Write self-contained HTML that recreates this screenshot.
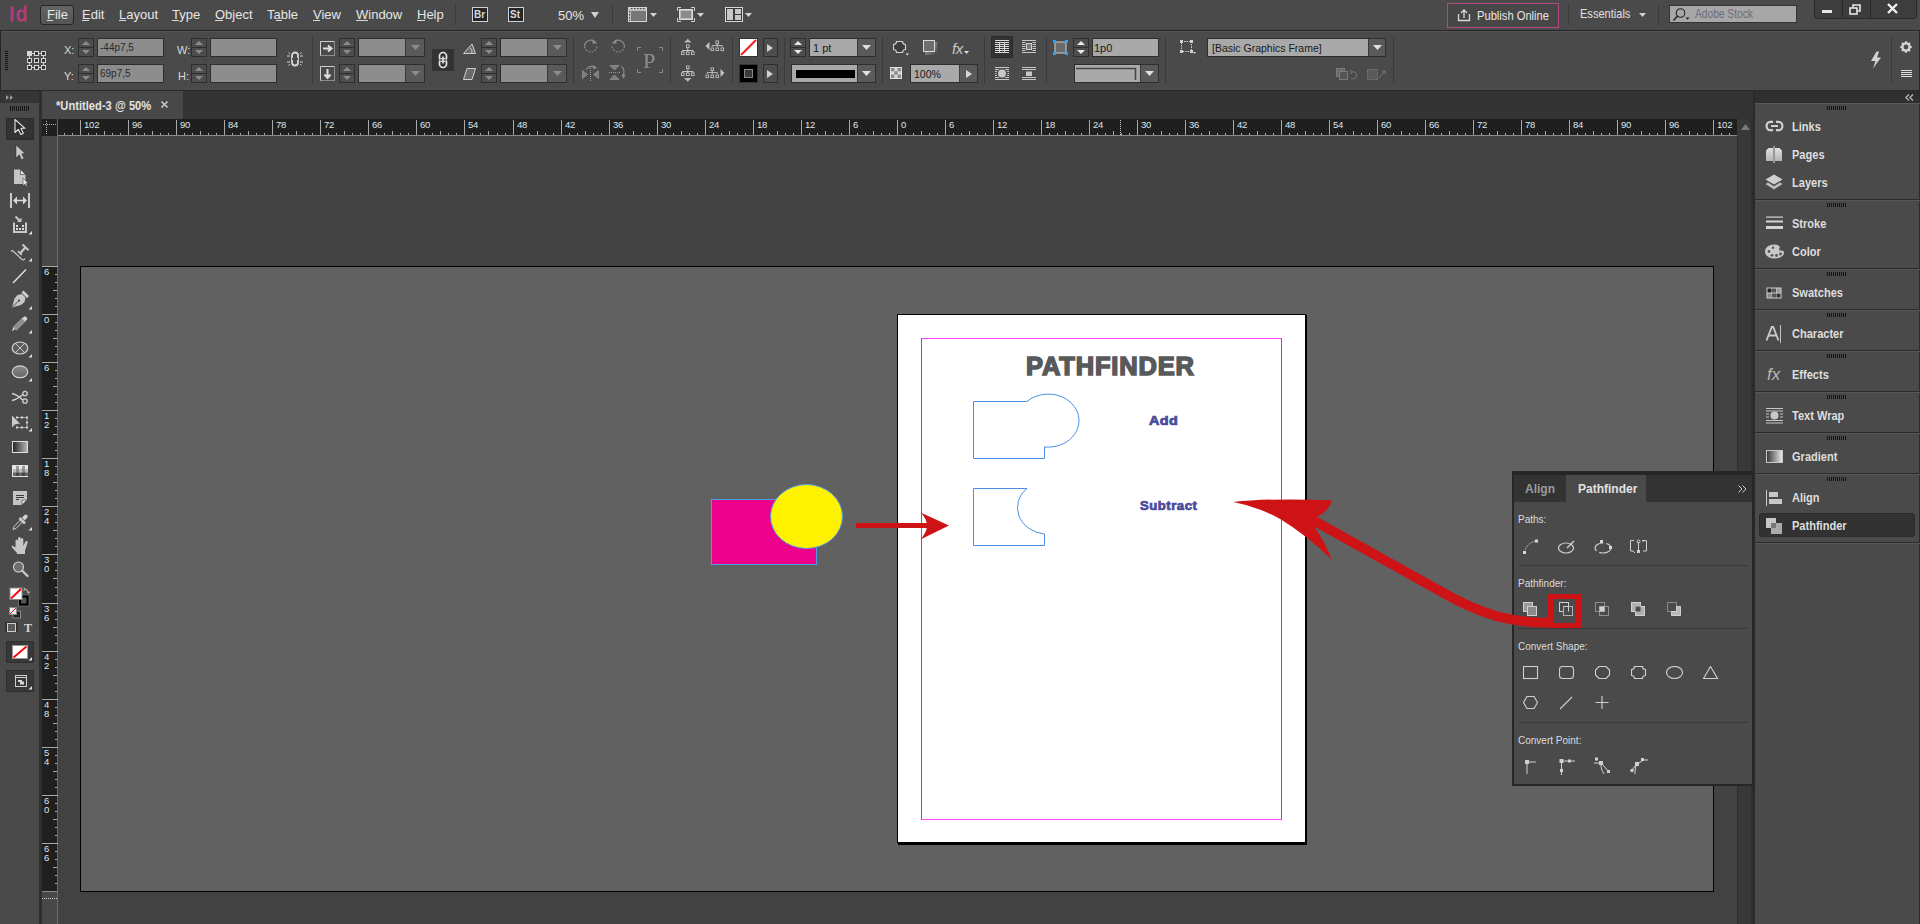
<!DOCTYPE html>
<html><head><meta charset="utf-8"><style>
html,body{margin:0;padding:0;width:1920px;height:924px;overflow:hidden;background:#424242}
body>div,body>span,body>svg{position:absolute;display:block}
span{white-space:nowrap;font-family:"Liberation Sans",sans-serif;color:#dcdcdc;font-size:12px;line-height:1}
</style></head><body>
<div style="left:0px;top:0px;width:1920px;height:30px;background:#4a4a4a"></div>
<div style="left:0px;top:30px;width:1920px;height:1px;background:#262626"></div>
<div style="left:0px;top:31px;width:1920px;height:59px;background:#4a4a4a"></div>
<div style="left:0px;top:31px;width:1920px;height:1px;background:#545454"></div>
<div style="left:0px;top:31px;width:1px;height:59px;background:#262626"></div>
<div style="left:1919px;top:31px;width:1px;height:59px;background:#262626"></div>
<div style="left:0px;top:90px;width:1920px;height:1px;background:#2a2a2a"></div>
<div style="left:0px;top:91px;width:1920px;height:28px;background:#333333"></div>
<div style="left:42px;top:91px;width:141px;height:28px;background:#484848"></div>
<div style="left:0px;top:91px;width:39px;height:833px;background:#4a4a4a"></div>
<div style="left:0px;top:91px;width:39px;height:12px;background:#353535"></div>
<div style="left:39px;top:91px;width:3px;height:833px;background:#2e2e2e"></div>
<div style="left:42px;top:119px;width:1695px;height:17px;background:#1f1f1f"></div>
<div style="left:42px;top:136px;width:16px;height:788px;background:#484848"></div>
<div style="left:42px;top:266px;width:16px;height:625px;background:#1f1f1f"></div>
<div style="left:57px;top:119px;width:1px;height:805px;background:#6a6a6a"></div>
<div style="left:58px;top:136px;width:1679px;height:788px;background:#424242"></div>
<div style="left:1737px;top:119px;width:16px;height:805px;background:#383838"></div>
<div style="left:1737px;top:136px;width:1px;height:788px;background:#303030"></div>
<div style="left:1751px;top:119px;width:2px;height:805px;background:#2e2e2e"></div>
<div style="left:80px;top:266px;width:1634px;height:626px;background:#616161;box-sizing:border-box;border:1px solid #000"></div>
<div style="left:898px;top:315px;width:409px;height:530px;background:#000"></div>
<div style="left:897px;top:314px;width:409px;height:529px;background:#fff;box-sizing:border-box;border:1px solid #000"></div>
<div style="left:921px;top:338px;width:361px;height:482px;box-sizing:border-box;border:1px solid #ff44ff;border-left-color:#9b3dff;border-right-color:#9b3dff"></div>
<div style="left:1753px;top:91px;width:2px;height:833px;background:#2a2a2a"></div>
<div style="left:1755px;top:91px;width:165px;height:12px;background:#2f2f2f"></div>
<div style="left:1755px;top:103px;width:165px;height:821px;background:#4a4a4a"></div>
<div style="left:1919px;top:91px;width:1px;height:833px;background:#2a2a2a"></div>
<span style="left:9px;top:4px;font-size:20px;color:#b53c78;letter-spacing:1.5px;line-height:20px;-webkit-text-stroke:0.8px #b53c78">Id</span>
<div style="left:40px;top:5px;width:34px;height:20px;box-sizing:border-box;border:1px solid #262626;border-radius:3px;background:linear-gradient(#646464,#545454)"></div>
<span style="left:47px;top:8px;font-size:13px;color:#e6e6e6;line-height:13px">File</span>
<div style="left:47px;top:20px;width:6px;height:1px;background:#d8d8d8"></div>
<span style="left:82px;top:8px;font-size:13px;color:#e6e6e6;line-height:13px">Edit</span>
<div style="left:82px;top:20px;width:7px;height:1px;background:#d8d8d8"></div>
<span style="left:119px;top:8px;font-size:13px;color:#e6e6e6;line-height:13px">Layout</span>
<div style="left:119px;top:20px;width:7px;height:1px;background:#d8d8d8"></div>
<span style="left:172px;top:8px;font-size:13px;color:#e6e6e6;line-height:13px">Type</span>
<div style="left:172px;top:20px;width:7px;height:1px;background:#d8d8d8"></div>
<span style="left:215px;top:8px;font-size:13px;color:#e6e6e6;line-height:13px">Object</span>
<div style="left:215px;top:20px;width:8px;height:1px;background:#d8d8d8"></div>
<span style="left:267px;top:8px;font-size:13px;color:#e6e6e6;line-height:13px">Table</span>
<div style="left:276px;top:20px;width:6px;height:1px;background:#d8d8d8"></div>
<span style="left:313px;top:8px;font-size:13px;color:#e6e6e6;line-height:13px">View</span>
<div style="left:313px;top:20px;width:7px;height:1px;background:#d8d8d8"></div>
<span style="left:356px;top:8px;font-size:13px;color:#e6e6e6;line-height:13px">Window</span>
<div style="left:356px;top:20px;width:12px;height:1px;background:#d8d8d8"></div>
<span style="left:417px;top:8px;font-size:13px;color:#e6e6e6;line-height:13px">Help</span>
<div style="left:417px;top:20px;width:8px;height:1px;background:#d8d8d8"></div>
<div style="left:455px;top:5px;width:1px;height:20px;background:#3a3a3a"></div>
<div style="left:472px;top:7px;width:16px;height:15px;box-sizing:border-box;border:1px solid #cfcfcf;background:#262626"></div>
<span style="left:474px;top:10px;font-size:10px;font-weight:bold;color:#d8d8d8;line-height:10px">Br</span>
<div style="left:508px;top:7px;width:16px;height:15px;box-sizing:border-box;border:1px solid #cfcfcf;background:#262626"></div>
<span style="left:510px;top:10px;font-size:10px;font-weight:bold;color:#d8d8d8;line-height:10px">St</span>
<span style="left:558px;top:9px;font-size:13px;color:#e6e6e6;line-height:13px">50%</span>
<svg style="left:591px;top:12px;" width="8" height="6" viewBox="0 0 8 6"><path d="M0 0H8L4 6Z" fill="#d0d0d0"/></svg>
<div style="left:612px;top:4px;width:1px;height:20px;background:#3a3a3a"></div>
<svg style="left:628px;top:7px;" width="30" height="16" viewBox="0 0 30 16"><rect x="0.5" y="0.5" width="18" height="14" fill="#bdbdbd" stroke="#d8d8d8"/><rect x="3" y="4" width="15" height="10" fill="#777"/><path d="M3 1.5h14M1.5 4v10" stroke="#444" stroke-dasharray="1.5 1.5"/><path d="M22 6H29L25.5 10Z" fill="#d0d0d0"/></svg>
<svg style="left:677px;top:7px;" width="28" height="16" viewBox="0 0 28 16"><path d="M0.5 4V0.5H4M14 0.5h3.5V4M17.5 11v3.5H14M4 14.5H0.5V11" stroke="#d0d0d0" fill="none"/><rect x="2.5" y="2.5" width="13" height="10" fill="#bdbdbd" stroke="#dcdcdc"/><rect x="4" y="4" width="10" height="7" fill="#8a8a8a"/><path d="M20 6H27L23.5 10Z" fill="#d0d0d0"/></svg>
<svg style="left:725px;top:7px;" width="28" height="16" viewBox="0 0 28 16"><rect x="0.5" y="0.5" width="17" height="14" fill="#3a3a3a" stroke="#d8d8d8"/><rect x="2" y="2" width="6" height="11" fill="#c8c8c8"/><rect x="10" y="2" width="6" height="5" fill="#c8c8c8"/><rect x="10" y="8" width="6" height="5" fill="#c8c8c8"/><path d="M20 6H27L23.5 10Z" fill="#d0d0d0"/></svg>
<div style="left:1447px;top:3px;width:112px;height:25px;box-sizing:border-box;border:1px solid #b04a80;background:#474747"></div>
<svg style="left:1457px;top:8px;" width="14" height="14" viewBox="0 0 14 14"><path d="M1.5 6v6.5h11V6" stroke="#d8d8d8" fill="none" stroke-width="1.3"/><path d="M7 10V2M4 5l3-3 3 3" stroke="#d8d8d8" fill="none" stroke-width="1.3"/></svg>
<span style="left:1477px;top:10px;font-size:12px;color:#e6e6e6;line-height:12px;transform:scaleX(0.93);transform-origin:0 0">Publish Online</span>
<div style="left:1568px;top:5px;width:1px;height:20px;background:#3a3a3a"></div>
<span style="left:1580px;top:7px;font-size:13px;color:#e0e0e0;line-height:13px;transform:scaleX(0.85);transform-origin:0 0">Essentials</span>
<svg style="left:1639px;top:13px;" width="7" height="4" viewBox="0 0 7 4"><path d="M0 0H7L3.5 4Z" fill="#d0d0d0"/></svg>
<div style="left:1658px;top:5px;width:1px;height:20px;background:#3a3a3a"></div>
<div style="left:1669px;top:5px;width:128px;height:18px;box-sizing:border-box;border:1px solid #333;background:#a7a7a7"></div>
<svg style="left:1672px;top:7px;" width="20" height="15" viewBox="0 0 20 15"><circle cx="8.5" cy="6" r="4.3" stroke="#222" fill="none" stroke-width="1.1"/><path d="M5.5 9L1.5 13.5" stroke="#222" stroke-width="1.4"/><path d="M13.5 10.5h4l-2 2.2z" fill="#222"/></svg>
<span style="left:1695px;top:8px;font-size:12px;color:#6c6c7c;line-height:12px;transform:scaleX(0.85);transform-origin:0 0">Adobe Stock</span>
<div style="left:1814px;top:0px;width:103px;height:19px;box-sizing:border-box;border:1px solid #2a2a2a;border-top:none;border-radius:0 0 4px 4px;background:#3d3d3d"></div>
<div style="left:1842px;top:0px;width:1px;height:18px;background:#2a2a2a"></div>
<div style="left:1870px;top:0px;width:1px;height:18px;background:#2a2a2a"></div>
<div style="left:1822px;top:10px;width:10px;height:3px;background:#e8e8e8"></div>
<svg style="left:1849px;top:4px;" width="13" height="11" viewBox="0 0 13 11"><rect x="1" y="4" width="7" height="6" fill="none" stroke="#e8e8e8" stroke-width="1.6"/><path d="M4 3.5V1h7v6H8.5" fill="none" stroke="#e8e8e8" stroke-width="1.6"/></svg>
<svg style="left:1887px;top:3px;" width="11" height="11" viewBox="0 0 11 11"><path d="M1 1L10 10M10 1L1 10" stroke="#f0f0f0" stroke-width="2.4"/></svg>
<svg style="left:5px;top:51px;" width="4" height="20" viewBox="0 0 4 20"><rect x="0" y="0" width="3" height="1" fill="#151515"/><rect x="0" y="2" width="3" height="1" fill="#151515"/><rect x="0" y="4" width="3" height="1" fill="#151515"/><rect x="0" y="6" width="3" height="1" fill="#151515"/><rect x="0" y="8" width="3" height="1" fill="#151515"/><rect x="0" y="10" width="3" height="1" fill="#151515"/><rect x="0" y="12" width="3" height="1" fill="#151515"/><rect x="0" y="14" width="3" height="1" fill="#151515"/><rect x="0" y="16" width="3" height="1" fill="#151515"/><rect x="0" y="18" width="3" height="1" fill="#151515"/></svg>
<svg style="left:27px;top:51px;" width="19" height="19" viewBox="0 0 19 19"><path d="M5 2.5H7M12 2.5H14M5 16.5H7M12 16.5H14M2.5 5V7M2.5 12V14M16.5 5V7M16.5 12V14" stroke="#d4d4d4"/><rect x="0.5" y="0.5" width="4" height="4" fill="#333" stroke="#d4d4d4"/><rect x="0.5" y="7.5" width="4" height="4" fill="#333" stroke="#d4d4d4"/><rect x="0.5" y="14.5" width="4" height="4" fill="#333" stroke="#d4d4d4"/><rect x="7.5" y="0.5" width="4" height="4" fill="#333" stroke="#d4d4d4"/><rect x="7.5" y="7.5" width="4" height="4" fill="#333" stroke="#d4d4d4"/><rect x="7.5" y="14.5" width="4" height="4" fill="#333" stroke="#d4d4d4"/><rect x="14.5" y="0.5" width="4" height="4" fill="#333" stroke="#d4d4d4"/><rect x="14.5" y="7.5" width="4" height="4" fill="#333" stroke="#d4d4d4"/><rect x="14.5" y="14.5" width="4" height="4" fill="#333" stroke="#d4d4d4"/><rect x="0" y="0" width="5" height="5" fill="#d4d4d4"/></svg>
<span style="left:64px;top:45px;font-size:11px;font-size:11px;color:#d8d8d8;line-height:11px">X:</span>
<span style="left:64px;top:71px;font-size:11px;font-size:11px;color:#d8d8d8;line-height:11px">Y:</span>
<div style="left:78px;top:38px;width:16px;height:19px;box-sizing:border-box;border:1px solid #2e2e2e;background:#4d4d4d"></div>
<div style="left:79px;top:47px;width:14px;height:1px;background:#2e2e2e"></div>
<svg style="left:82px;top:41px;" width="8" height="4" viewBox="0 0 8 4"><path d="M0 4H8L4 0Z" fill="#8c8c8c"/></svg>
<svg style="left:82px;top:50px;" width="8" height="4" viewBox="0 0 8 4"><path d="M0 0H8L4 4Z" fill="#8c8c8c"/></svg>
<div style="left:97px;top:38px;width:67px;height:19px;box-sizing:border-box;border:1px solid #2e2e2e;background:#8d8d8d"></div>
<span style="left:100px;top:43px;font-size:10px;color:#2a2a2a;line-height:10px">-44p7,5</span>
<div style="left:78px;top:64px;width:16px;height:19px;box-sizing:border-box;border:1px solid #2e2e2e;background:#4d4d4d"></div>
<div style="left:79px;top:73px;width:14px;height:1px;background:#2e2e2e"></div>
<svg style="left:82px;top:67px;" width="8" height="4" viewBox="0 0 8 4"><path d="M0 4H8L4 0Z" fill="#8c8c8c"/></svg>
<svg style="left:82px;top:76px;" width="8" height="4" viewBox="0 0 8 4"><path d="M0 0H8L4 4Z" fill="#8c8c8c"/></svg>
<div style="left:97px;top:64px;width:67px;height:19px;box-sizing:border-box;border:1px solid #2e2e2e;background:#8d8d8d"></div>
<span style="left:100px;top:69px;font-size:10px;color:#2a2a2a;line-height:10px">69p7,5</span>
<span style="left:177px;top:45px;font-size:11px;font-size:11px;color:#d8d8d8;line-height:11px">W:</span>
<span style="left:178px;top:71px;font-size:11px;font-size:11px;color:#d8d8d8;line-height:11px">H:</span>
<div style="left:191px;top:38px;width:16px;height:19px;box-sizing:border-box;border:1px solid #2e2e2e;background:#4d4d4d"></div>
<div style="left:192px;top:47px;width:14px;height:1px;background:#2e2e2e"></div>
<svg style="left:195px;top:41px;" width="8" height="4" viewBox="0 0 8 4"><path d="M0 4H8L4 0Z" fill="#8c8c8c"/></svg>
<svg style="left:195px;top:50px;" width="8" height="4" viewBox="0 0 8 4"><path d="M0 0H8L4 4Z" fill="#8c8c8c"/></svg>
<div style="left:210px;top:38px;width:67px;height:19px;box-sizing:border-box;border:1px solid #2e2e2e;background:#8d8d8d"></div>
<div style="left:191px;top:64px;width:16px;height:19px;box-sizing:border-box;border:1px solid #2e2e2e;background:#4d4d4d"></div>
<div style="left:192px;top:73px;width:14px;height:1px;background:#2e2e2e"></div>
<svg style="left:195px;top:67px;" width="8" height="4" viewBox="0 0 8 4"><path d="M0 4H8L4 0Z" fill="#8c8c8c"/></svg>
<svg style="left:195px;top:76px;" width="8" height="4" viewBox="0 0 8 4"><path d="M0 0H8L4 4Z" fill="#8c8c8c"/></svg>
<div style="left:210px;top:64px;width:67px;height:19px;box-sizing:border-box;border:1px solid #2e2e2e;background:#8d8d8d"></div>
<svg style="left:287px;top:51px;" width="16" height="16" viewBox="0 0 16 16"><rect x="5" y="1.5" width="6" height="13" rx="3" fill="none" stroke="#d4d4d4" stroke-width="1.8"/><path d="M5 8H11" stroke="#4a4a4a" stroke-width="2"/><path d="M0 5H3M0 11H3M13 5H16M13 11H16M1.5 1.5L3 3M14.5 1.5L13 3M1.5 14.5L3 13M14.5 14.5L13 13" stroke="#cfcfcf"/></svg>
<div style="left:312px;top:37px;width:1px;height:47px;background:#3a3a3a"></div>
<svg style="left:320px;top:41px;" width="15" height="15" viewBox="0 0 15 15"><path d="M0.5 14.5V0.5H14.5" stroke="#d0d0d0" fill="none"/><path d="M0.5 14.5H14.5V0.5" stroke="#d0d0d0" stroke-dasharray="1 1" fill="none"/><path d="M3 7.5H10M8 4.5L11.5 7.5L8 10.5" stroke="#e0e0e0" stroke-width="2" fill="none"/></svg>
<svg style="left:320px;top:66px;" width="15" height="15" viewBox="0 0 15 15"><path d="M0.5 14.5V0.5H14.5" stroke="#d0d0d0" fill="none"/><path d="M0.5 14.5H14.5V0.5" stroke="#d0d0d0" stroke-dasharray="1 1" fill="none"/><path d="M7.5 3V11M4.5 8.5L7.5 12L10.5 8.5" stroke="#e0e0e0" stroke-width="2" fill="none"/></svg>
<div style="left:339px;top:38px;width:16px;height:19px;box-sizing:border-box;border:1px solid #2e2e2e;background:#4d4d4d"></div>
<div style="left:340px;top:47px;width:14px;height:1px;background:#2e2e2e"></div>
<svg style="left:343px;top:41px;" width="8" height="4" viewBox="0 0 8 4"><path d="M0 4H8L4 0Z" fill="#8c8c8c"/></svg>
<svg style="left:343px;top:50px;" width="8" height="4" viewBox="0 0 8 4"><path d="M0 0H8L4 4Z" fill="#8c8c8c"/></svg>
<div style="left:358px;top:38px;width:67px;height:19px;box-sizing:border-box;border:1px solid #2e2e2e;background:#5a5a5a"></div>
<div style="left:359px;top:39px;width:46px;height:17px;background:#8d8d8d"></div>
<div style="left:405px;top:39px;width:1px;height:17px;background:#3a3a3a"></div>
<svg style="left:411px;top:45px;" width="9" height="5" viewBox="0 0 9 5"><path d="M0 0H9L4.5 5Z" fill="#8c8c8c"/></svg>
<div style="left:339px;top:64px;width:16px;height:19px;box-sizing:border-box;border:1px solid #2e2e2e;background:#4d4d4d"></div>
<div style="left:340px;top:73px;width:14px;height:1px;background:#2e2e2e"></div>
<svg style="left:343px;top:67px;" width="8" height="4" viewBox="0 0 8 4"><path d="M0 4H8L4 0Z" fill="#8c8c8c"/></svg>
<svg style="left:343px;top:76px;" width="8" height="4" viewBox="0 0 8 4"><path d="M0 0H8L4 4Z" fill="#8c8c8c"/></svg>
<div style="left:358px;top:64px;width:67px;height:19px;box-sizing:border-box;border:1px solid #2e2e2e;background:#5a5a5a"></div>
<div style="left:359px;top:65px;width:46px;height:17px;background:#8d8d8d"></div>
<div style="left:405px;top:65px;width:1px;height:17px;background:#3a3a3a"></div>
<svg style="left:411px;top:71px;" width="9" height="5" viewBox="0 0 9 5"><path d="M0 0H9L4.5 5Z" fill="#8c8c8c"/></svg>
<div style="left:432px;top:49px;width:22px;height:22px;background:#333"></div>
<svg style="left:436px;top:51px;" width="14" height="18" viewBox="0 0 14 18"><rect x="3.5" y="1.5" width="7" height="9" rx="3.5" fill="none" stroke="#e4e4e4" stroke-width="1.7"/><rect x="3.5" y="7.5" width="7" height="9" rx="3.5" fill="none" stroke="#e4e4e4" stroke-width="1.7"/><path d="M3.5 9H10.5" stroke="#333" stroke-width="1.2"/><path d="M7 5.5V12.5" stroke="#e4e4e4" stroke-width="1.5"/></svg>
<svg style="left:463px;top:43px;" width="13" height="11" viewBox="0 0 13 11"><path d="M0.5 10.5H12.5L9 1Z" fill="#6a6a6a" stroke="#d0d0d0"/><path d="M7 5A5 5 0 0 1 9 10" stroke="#d0d0d0" fill="none"/></svg>
<svg style="left:463px;top:68px;" width="13" height="12" viewBox="0 0 13 12"><path d="M4 0.5H12.5L9 11.5H0.5Z" fill="#6a6a6a" stroke="#d0d0d0"/></svg>
<div style="left:481px;top:38px;width:16px;height:19px;box-sizing:border-box;border:1px solid #2e2e2e;background:#4d4d4d"></div>
<div style="left:482px;top:47px;width:14px;height:1px;background:#2e2e2e"></div>
<svg style="left:485px;top:41px;" width="8" height="4" viewBox="0 0 8 4"><path d="M0 4H8L4 0Z" fill="#8c8c8c"/></svg>
<svg style="left:485px;top:50px;" width="8" height="4" viewBox="0 0 8 4"><path d="M0 0H8L4 4Z" fill="#8c8c8c"/></svg>
<div style="left:500px;top:38px;width:67px;height:19px;box-sizing:border-box;border:1px solid #2e2e2e;background:#5a5a5a"></div>
<div style="left:501px;top:39px;width:46px;height:17px;background:#8d8d8d"></div>
<div style="left:547px;top:39px;width:1px;height:17px;background:#3a3a3a"></div>
<svg style="left:553px;top:45px;" width="9" height="5" viewBox="0 0 9 5"><path d="M0 0H9L4.5 5Z" fill="#8c8c8c"/></svg>
<div style="left:481px;top:64px;width:16px;height:19px;box-sizing:border-box;border:1px solid #2e2e2e;background:#4d4d4d"></div>
<div style="left:482px;top:73px;width:14px;height:1px;background:#2e2e2e"></div>
<svg style="left:485px;top:67px;" width="8" height="4" viewBox="0 0 8 4"><path d="M0 4H8L4 0Z" fill="#8c8c8c"/></svg>
<svg style="left:485px;top:76px;" width="8" height="4" viewBox="0 0 8 4"><path d="M0 0H8L4 4Z" fill="#8c8c8c"/></svg>
<div style="left:500px;top:64px;width:67px;height:19px;box-sizing:border-box;border:1px solid #2e2e2e;background:#5a5a5a"></div>
<div style="left:501px;top:65px;width:46px;height:17px;background:#8d8d8d"></div>
<div style="left:547px;top:65px;width:1px;height:17px;background:#3a3a3a"></div>
<svg style="left:553px;top:71px;" width="9" height="5" viewBox="0 0 9 5"><path d="M0 0H9L4.5 5Z" fill="#8c8c8c"/></svg>
<div style="left:573px;top:37px;width:1px;height:47px;background:#3a3a3a"></div>
<svg style="left:582px;top:37px;" width="18" height="19" viewBox="0 0 18 19"><path d="M2.5 9.5A6.3 6.3 0 0 1 12.5 4.5" stroke="#8c8c8c" fill="none" stroke-width="1.2"/><path d="M2.5 9.5A6.3 6.3 0 0 0 15 9.5" stroke="#8c8c8c" fill="none" stroke-width="1.2" stroke-dasharray="1.8 1.4"/><path d="M10.5 2.2L15.5 6.2L10.5 6.8Z" fill="#8c8c8c"/></svg>
<svg style="left:609px;top:37px;" width="18" height="19" viewBox="0 0 18 19"><path d="M15.5 9.5A6.3 6.3 0 0 0 5.5 4.5" stroke="#8c8c8c" fill="none" stroke-width="1.2"/><path d="M15.5 9.5A6.3 6.3 0 0 1 3 9.5" stroke="#8c8c8c" fill="none" stroke-width="1.2" stroke-dasharray="1.8 1.4"/><path d="M7.5 2.2L2.5 6.2L7.5 6.8Z" fill="#8c8c8c"/></svg>
<svg style="left:582px;top:64px;" width="17" height="18" viewBox="0 0 17 18"><path d="M8.5 4V17" stroke="#9a9a9a" stroke-dasharray="1 1"/><path d="M0.5 6.5L5.5 10.5L0.5 14.5Z M16.5 6.5L11.5 10.5L16.5 14.5Z" fill="#7e7e7e" stroke="#8e8e8e" stroke-width="0.8"/><path d="M4 5.5Q8 0.5 12.5 3.5" stroke="#8c8c8c" fill="none" stroke-width="1.1"/><path d="M11 1L15 3.8L11.5 5.5Z" fill="#8c8c8c"/></svg>
<svg style="left:609px;top:65px;" width="17" height="18" viewBox="0 0 17 18"><path d="M0 7.5H11" stroke="#9a9a9a" stroke-dasharray="1 1"/><path d="M1 0.5H10L5.5 5Z M1 14.5H10L5.5 10Z" fill="#7e7e7e" stroke="#8e8e8e" stroke-width="0.8"/><path d="M12.5 1.5Q16 4 14.5 10" stroke="#8c8c8c" fill="none" stroke-width="1.1"/><path d="M12.5 9.5L14.5 14L16.5 9.5Z" fill="#8c8c8c"/></svg>
<svg style="left:637px;top:47px;" width="26" height="26" viewBox="0 0 26 26"><path d="M0.5 4V0.5H4M22 0.5H25.5V4M25.5 22V25.5H22M4 25.5H0.5V22" stroke="#8a8a8a" fill="none"/></svg>
<span style="left:643px;top:50px;font-family:'Liberation Serif',serif;font-size:22px;color:#8e8e8e;line-height:22px">P</span>
<div style="left:670px;top:37px;width:1px;height:47px;background:#3a3a3a"></div>
<svg style="left:680px;top:38px;" width="16" height="18" viewBox="0 0 16 18"><path d="M4 4.5L7.75 0.8L11.5 4.5Z" fill="#b8b8b8"/><path d="M7.75 10V12.5M2.5 12.5H13M2.5 12.5V14M7.75 12.5V14M13 12.5V14" stroke="#c4c4c4" fill="none"/><rect x="6.5" y="7.0" width="2.6" height="2.6" fill="#3a3a3a" stroke="#c4c4c4" stroke-width="0.9"/><rect x="1.5" y="14.0" width="2.6" height="2.6" fill="#3a3a3a" stroke="#c4c4c4" stroke-width="0.9"/><rect x="6.5" y="14.0" width="2.6" height="2.6" fill="#3a3a3a" stroke="#c4c4c4" stroke-width="0.9"/><rect x="11.5" y="14.0" width="2.6" height="2.6" fill="#3a3a3a" stroke="#c4c4c4" stroke-width="0.9"/></svg>
<svg style="left:680px;top:65px;" width="16" height="18" viewBox="0 0 16 18"><path d="M7.75 4.5V6.5M2.5 6.5H13M2.5 6.5V8M7.75 6.5V8M13 6.5V8" stroke="#c4c4c4" fill="none"/><rect x="6.5" y="1.0" width="2.6" height="2.6" fill="#3a3a3a" stroke="#c4c4c4" stroke-width="0.9"/><rect x="1.5" y="8.0" width="2.6" height="2.6" fill="#3a3a3a" stroke="#c4c4c4" stroke-width="0.9"/><rect x="6.5" y="8.0" width="2.6" height="2.6" fill="#3a3a3a" stroke="#c4c4c4" stroke-width="0.9"/><rect x="11.5" y="8.0" width="2.6" height="2.6" fill="#3a3a3a" stroke="#c4c4c4" stroke-width="0.9"/><path d="M4 13L7.75 16.8L11.5 13Z" fill="#b8b8b8"/></svg>
<svg style="left:704px;top:38px;" width="22" height="15" viewBox="0 0 22 15"><path d="M1.5 8L5.5 4V12Z" fill="#c4c4c4"/><path d="M13.2 6V7.5M8.2 7.5H18.2M8.2 7.5V9M13.2 7.5V9M18.2 7.5V9" stroke="#c4c4c4" stroke-width="0.9" fill="none"/><rect x="12.0" y="3.0" width="2.6" height="2.6" fill="#3a3a3a" stroke="#c4c4c4" stroke-width="0.9"/><rect x="7.0" y="10.0" width="2.6" height="2.6" fill="#3a3a3a" stroke="#c4c4c4" stroke-width="0.9"/><rect x="12.0" y="10.0" width="2.6" height="2.6" fill="#3a3a3a" stroke="#c4c4c4" stroke-width="0.9"/><rect x="17.0" y="10.0" width="2.6" height="2.6" fill="#3a3a3a" stroke="#c4c4c4" stroke-width="0.9"/></svg>
<svg style="left:704px;top:65px;" width="22" height="15" viewBox="0 0 22 15"><path d="M20.5 8L16.5 4V12Z" fill="#c4c4c4"/><path d="M8.2 6V7.5M3.2 7.5H13.2M3.2 7.5V9M8.2 7.5V9M13.2 7.5V9" stroke="#c4c4c4" stroke-width="0.9" fill="none"/><rect x="7.0" y="3.0" width="2.6" height="2.6" fill="#3a3a3a" stroke="#c4c4c4" stroke-width="0.9"/><rect x="2.0" y="10.0" width="2.6" height="2.6" fill="#3a3a3a" stroke="#c4c4c4" stroke-width="0.9"/><rect x="7.0" y="10.0" width="2.6" height="2.6" fill="#3a3a3a" stroke="#c4c4c4" stroke-width="0.9"/><rect x="12.0" y="10.0" width="2.6" height="2.6" fill="#3a3a3a" stroke="#c4c4c4" stroke-width="0.9"/></svg>
<div style="left:732px;top:37px;width:1px;height:47px;background:#3a3a3a"></div>
<div style="left:739px;top:38px;width:19px;height:19px;box-sizing:border-box;border:1px solid #333;background:#fff"></div>
<svg style="left:740px;top:39px;" width="17" height="17" viewBox="0 0 17 17"><path d="M1 16L16 1" stroke="#ff1a1a" stroke-width="2"/></svg>
<div style="left:763px;top:38px;width:15px;height:19px;box-sizing:border-box;border:1px solid #2e2e2e;background:#4d4d4d"></div>
<svg style="left:767px;top:44px;" width="6" height="8" viewBox="0 0 6 8"><path d="M0 0L6 4L0 8Z" fill="#d0d0d0"/></svg>
<div style="left:739px;top:64px;width:19px;height:19px;box-sizing:border-box;border:1px solid #333;background:#000"></div>
<div style="left:744px;top:69px;width:9px;height:9px;box-sizing:border-box;border:1px solid #8a8a8a;background:#3a3a3a"></div>
<div style="left:763px;top:64px;width:15px;height:19px;box-sizing:border-box;border:1px solid #2e2e2e;background:#4d4d4d"></div>
<svg style="left:767px;top:70px;" width="6" height="8" viewBox="0 0 6 8"><path d="M0 0L6 4L0 8Z" fill="#d0d0d0"/></svg>
<div style="left:784px;top:37px;width:1px;height:47px;background:#3a3a3a"></div>
<div style="left:790px;top:38px;width:16px;height:19px;box-sizing:border-box;border:1px solid #2e2e2e;background:#4d4d4d"></div>
<div style="left:791px;top:47px;width:14px;height:1px;background:#2e2e2e"></div>
<svg style="left:794px;top:41px;" width="8" height="4" viewBox="0 0 8 4"><path d="M0 4H8L4 0Z" fill="#e8e8e8"/></svg>
<svg style="left:794px;top:50px;" width="8" height="4" viewBox="0 0 8 4"><path d="M0 0H8L4 4Z" fill="#e8e8e8"/></svg>
<div style="left:809px;top:38px;width:67px;height:19px;box-sizing:border-box;border:1px solid #2e2e2e;background:#5a5a5a"></div>
<div style="left:810px;top:39px;width:47px;height:17px;background:#a9a9a9"></div>
<div style="left:857px;top:39px;width:1px;height:17px;background:#3a3a3a"></div>
<svg style="left:862px;top:45px;" width="9" height="5" viewBox="0 0 9 5"><path d="M0 0H9L4.5 5Z" fill="#e0e0e0"/></svg>
<span style="left:813px;top:43px;font-size:11px;color:#1a1a1a;line-height:11px">1 pt</span>
<div style="left:791px;top:64px;width:85px;height:19px;box-sizing:border-box;border:1px solid #2e2e2e;background:#5a5a5a"></div>
<div style="left:792px;top:65px;width:65px;height:17px;background:#a9a9a9"></div>
<div style="left:857px;top:65px;width:1px;height:17px;background:#3a3a3a"></div>
<svg style="left:862px;top:71px;" width="9" height="5" viewBox="0 0 9 5"><path d="M0 0H9L4.5 5Z" fill="#e0e0e0"/></svg>
<div style="left:796px;top:70px;width:59px;height:8px;background:#000"></div>
<div style="left:882px;top:37px;width:1px;height:47px;background:#3a3a3a"></div>
<svg style="left:893px;top:40px;" width="17" height="16" viewBox="0 0 17 16"><path d="M3.5 1.5H9.5Q9.5 4.5 12.5 4.5V9.5Q9.5 9.5 9.5 12.5H3.5Q3.5 9.5 0.5 9.5V4.5Q3.5 4.5 3.5 1.5Z" fill="#3c3c3c" stroke="#d4d4d4" stroke-width="1.1"/><path d="M12.5 13.5H16L14.25 15.5Z" fill="#e0e0e0"/></svg>
<svg style="left:890px;top:67px;" width="12" height="13" viewBox="0 0 12 13"><rect x="0.5" y="0.5" width="11" height="11" fill="#d8d8d8" stroke="#e0e0e0"/><rect x="1.0" y="1.0" width="3.3" height="3.3" fill="#888"/><rect x="1.0" y="7.6" width="3.3" height="3.3" fill="#888"/><rect x="4.3" y="4.3" width="3.3" height="3.3" fill="#888"/><rect x="7.6" y="1.0" width="3.3" height="3.3" fill="#888"/><rect x="7.6" y="7.6" width="3.3" height="3.3" fill="#888"/></svg>
<svg style="left:923px;top:40px;" width="16" height="16" viewBox="0 0 16 16"><defs><linearGradient id="gs" x1="0" y1="0" x2="1" y2="1"><stop offset="0" stop-color="#aaa"/><stop offset="1" stop-color="#444"/></linearGradient></defs><path d="M11.5 2H14.5V15H2V12H11.5Z" fill="url(#gs)"/><rect x="0.5" y="0.5" width="11" height="11" fill="#6e6e6e" stroke="#dadada"/></svg>
<span style="left:952px;top:41px;font-style:italic;font-size:15px;color:#c8c8c8;line-height:15px;letter-spacing:-0.5px">fx</span>
<svg style="left:964px;top:51px;" width="5" height="3" viewBox="0 0 5 3"><path d="M0 0H5L2.5 3Z" fill="#e0e0e0"/></svg>
<div style="left:910px;top:64px;width:68px;height:19px;box-sizing:border-box;border:1px solid #2e2e2e;background:#5a5a5a"></div>
<div style="left:911px;top:65px;width:48px;height:17px;background:#a9a9a9"></div>
<div style="left:959px;top:65px;width:1px;height:17px;background:#3a3a3a"></div>
<svg style="left:964px;top:71px;" width="9" height="5" viewBox="0 0 9 5"><path d="M0 0H9L4.5 5Z" fill="#e0e0e0"/></svg>
<span style="left:914px;top:69px;font-size:10.5px;color:#1a1a1a;line-height:10.5px">100%</span>
<div style="left:960px;top:65px;width:17px;height:17px;background:#5a5a5a"></div>
<svg style="left:966px;top:70px;" width="6" height="8" viewBox="0 0 6 8"><path d="M0 0L6 4L0 8Z" fill="#d8d8d8"/></svg>
<div style="left:984px;top:37px;width:1px;height:47px;background:#3a3a3a"></div>
<div style="left:991px;top:36px;width:22px;height:22px;background:#333;box-sizing:border-box;border:1px solid #2a2a2a"></div>
<svg style="left:995px;top:39px;" width="15" height="16" viewBox="0 0 15 16"><path d="M0 1.5H14" stroke="#d8d8d8"/><path d="M0 3.5H14" stroke="#d8d8d8"/><path d="M0 5.5H14" stroke="#d8d8d8"/><path d="M0 7.5H14" stroke="#d8d8d8"/><path d="M0 9.5H14" stroke="#d8d8d8"/><path d="M0 11.5H14" stroke="#d8d8d8"/><path d="M0 13.5H14" stroke="#d8d8d8"/><path d="M4.5 4V13M9.5 4V13" stroke="#d8d8d8"/></svg>
<svg style="left:1022px;top:39px;" width="15" height="16" viewBox="0 0 15 16"><path d="M0 1.5H14" stroke="#c8c8c8"/><path d="M0 3.5H14" stroke="#c8c8c8"/><path d="M0 5.5H14" stroke="#c8c8c8"/><path d="M0 7.5H14" stroke="#c8c8c8"/><path d="M0 9.5H14" stroke="#c8c8c8"/><path d="M0 11.5H14" stroke="#c8c8c8"/><path d="M0 13.5H14" stroke="#c8c8c8"/><rect x="3.5" y="3" width="7" height="9" fill="#4a4a4a"/><rect x="4.5" y="4.5" width="5" height="6" fill="#7a7a7a" stroke="#d0d0d0"/></svg>
<svg style="left:995px;top:66px;" width="15" height="15" viewBox="0 0 15 15"><path d="M0 1.5H14" stroke="#c8c8c8"/><path d="M0 3.5H14" stroke="#c8c8c8"/><path d="M0 5.5H14" stroke="#c8c8c8"/><path d="M0 7.5H14" stroke="#c8c8c8"/><path d="M0 9.5H14" stroke="#c8c8c8"/><path d="M0 11.5H14" stroke="#c8c8c8"/><path d="M0 13.5H14" stroke="#c8c8c8"/><ellipse cx="7" cy="7.5" rx="5.5" ry="5" fill="#4a4a4a"/><ellipse cx="7" cy="7.5" rx="4" ry="4" fill="#c8c8c8"/></svg>
<svg style="left:1022px;top:66px;" width="15" height="15" viewBox="0 0 15 15"><path d="M0 1.5H14M0 3.5H14M0 11.5H14M0 13.5H14" stroke="#c8c8c8"/><rect x="4" y="5.5" width="6" height="4.5" fill="#c8c8c8"/></svg>
<div style="left:1046px;top:37px;width:1px;height:47px;background:#3a3a3a"></div>
<svg style="left:1053px;top:40px;" width="15" height="15" viewBox="0 0 15 15"><rect x="2" y="2" width="11" height="11" fill="#6a6a6a" stroke="#cfcfcf"/><rect x="0" y="0" width="3" height="3" fill="#29a3ff"/><rect x="12" y="0" width="3" height="3" fill="#29a3ff"/><rect x="0" y="12" width="3" height="3" fill="#29a3ff"/><rect x="12" y="12" width="3" height="3" fill="#29a3ff"/></svg>
<div style="left:1073px;top:38px;width:16px;height:19px;box-sizing:border-box;border:1px solid #2e2e2e;background:#4d4d4d"></div>
<div style="left:1074px;top:47px;width:14px;height:1px;background:#2e2e2e"></div>
<svg style="left:1077px;top:41px;" width="8" height="4" viewBox="0 0 8 4"><path d="M0 4H8L4 0Z" fill="#e8e8e8"/></svg>
<svg style="left:1077px;top:50px;" width="8" height="4" viewBox="0 0 8 4"><path d="M0 0H8L4 4Z" fill="#e8e8e8"/></svg>
<div style="left:1092px;top:38px;width:67px;height:19px;box-sizing:border-box;border:1px solid #2e2e2e;background:#a9a9a9"></div>
<span style="left:1094px;top:43px;font-size:11px;color:#1a1a1a;line-height:11px">1p0</span>
<div style="left:1074px;top:64px;width:85px;height:19px;box-sizing:border-box;border:1px solid #2e2e2e;background:#5a5a5a"></div>
<div style="left:1075px;top:65px;width:65px;height:17px;background:#a9a9a9"></div>
<div style="left:1140px;top:65px;width:1px;height:17px;background:#3a3a3a"></div>
<svg style="left:1145px;top:71px;" width="9" height="5" viewBox="0 0 9 5"><path d="M0 0H9L4.5 5Z" fill="#e0e0e0"/></svg>
<svg style="left:1076px;top:67px;" width="62" height="13" viewBox="0 0 62 13"><path d="M0 1.5H59.5V13" stroke="#444" stroke-width="1.5" fill="none"/></svg>
<div style="left:1165px;top:37px;width:1px;height:47px;background:#3a3a3a"></div>
<svg style="left:1180px;top:40px;" width="16" height="14" viewBox="0 0 16 14"><rect x="1.5" y="1.5" width="10" height="10" fill="none" stroke="#d0d0d0" stroke-dasharray="1.5 1"/><rect x="0" y="0" width="3" height="3" fill="#d0d0d0"/><rect x="10" y="0" width="3" height="3" fill="#d0d0d0"/><rect x="0" y="10" width="3" height="3" fill="#d0d0d0"/><rect x="10" y="10" width="3" height="3" fill="#d0d0d0"/><path d="M13 12H16L14.5 14Z" fill="#d0d0d0"/></svg>
<div style="left:1207px;top:38px;width:179px;height:19px;box-sizing:border-box;border:1px solid #2e2e2e;background:#5a5a5a"></div>
<div style="left:1208px;top:39px;width:160px;height:17px;background:#a9a9a9"></div>
<div style="left:1368px;top:39px;width:1px;height:17px;background:#3a3a3a"></div>
<svg style="left:1373px;top:45px;" width="9" height="5" viewBox="0 0 9 5"><path d="M0 0H9L4.5 5Z" fill="#e0e0e0"/></svg>
<span style="left:1212px;top:43px;font-size:10.5px;color:#1a1a1a;line-height:10.5px">[Basic Graphics Frame]</span>
<svg style="left:1336px;top:68px;" width="22" height="13" viewBox="0 0 22 13"><rect x="0.5" y="0.5" width="8" height="8" fill="#6a6a6a" stroke="#7a7a7a"/><rect x="3.5" y="3.5" width="8" height="8" fill="#555" stroke="#7a7a7a"/><path d="M16 4A3.5 3.5 0 1 1 15 10M14 2L16 4.5L13.5 6" stroke="#7a7a7a" fill="none"/></svg>
<svg style="left:1367px;top:68px;" width="19" height="13" viewBox="0 0 19 13"><rect x="0.5" y="1.5" width="10" height="10" fill="#5a5a5a" stroke="#7a7a7a" stroke-dasharray="1.5 1"/><path d="M12 10L18 3M15 3H18V6" stroke="#7a7a7a" fill="none"/></svg>
<div style="left:1393px;top:37px;width:1px;height:47px;background:#3a3a3a"></div>
<svg style="left:1870px;top:51px;" width="12" height="18" viewBox="0 0 12 18"><path d="M6.5 0.5L1 10H5.5L3 17.5L11 6.5H7L9 0.5Z" fill="#d4d4d4"/></svg>
<div style="left:1891px;top:37px;width:1px;height:47px;background:#3a3a3a"></div>
<svg style="left:1900px;top:41px;" width="12" height="12" viewBox="0 0 12 12"><circle cx="6" cy="6" r="3.6" fill="none" stroke="#d4d4d4" stroke-width="2.4"/><rect x="5" y="0.3" width="2" height="2.5" fill="#d4d4d4" transform="rotate(0 6 6)"/><rect x="5" y="0.3" width="2" height="2.5" fill="#d4d4d4" transform="rotate(45 6 6)"/><rect x="5" y="0.3" width="2" height="2.5" fill="#d4d4d4" transform="rotate(90 6 6)"/><rect x="5" y="0.3" width="2" height="2.5" fill="#d4d4d4" transform="rotate(135 6 6)"/><rect x="5" y="0.3" width="2" height="2.5" fill="#d4d4d4" transform="rotate(180 6 6)"/><rect x="5" y="0.3" width="2" height="2.5" fill="#d4d4d4" transform="rotate(225 6 6)"/><rect x="5" y="0.3" width="2" height="2.5" fill="#d4d4d4" transform="rotate(270 6 6)"/><rect x="5" y="0.3" width="2" height="2.5" fill="#d4d4d4" transform="rotate(315 6 6)"/></svg>
<svg style="left:1901px;top:70px;" width="11" height="8" viewBox="0 0 11 8"><path d="M0 0.5H11M0 2.5H11M0 4.5H11M0 6.5H11" stroke="#e0e0e0" stroke-width="1"/></svg>
<span style="left:56px;top:100px;font-size:12px;font-weight:bold;color:#e2e2e2;line-height:12px;transform:scaleX(0.93);transform-origin:0 0">*Untitled-3 @ 50%</span>
<svg style="left:161px;top:101px;" width="7" height="7" viewBox="0 0 7 7"><path d="M0.5 0.5L6.5 6.5M6.5 0.5L0.5 6.5" stroke="#c0c0c0" stroke-width="1.6"/></svg>
<svg style="left:43px;top:121px;" width="14" height="14" viewBox="0 0 14 14"><path d="M3.5 0V14M0 3.5H14" stroke="#b0b0b0" stroke-dasharray="1 1"/></svg>
<svg style="left:58px;top:119px;" width="1679" height="17" viewBox="0 0 1679 17"><rect x="6" y="14" width="1" height="2" fill="#a8a8a8"/><rect x="14" y="14" width="1" height="2" fill="#a8a8a8"/><rect x="22" y="1" width="1" height="15" fill="#a8a8a8"/><rect x="30" y="14" width="1" height="2" fill="#a8a8a8"/><rect x="38" y="14" width="1" height="2" fill="#a8a8a8"/><rect x="46" y="12" width="1" height="4" fill="#a8a8a8"/><rect x="54" y="14" width="1" height="2" fill="#a8a8a8"/><rect x="62" y="14" width="1" height="2" fill="#a8a8a8"/><rect x="70" y="1" width="1" height="15" fill="#a8a8a8"/><rect x="78" y="14" width="1" height="2" fill="#a8a8a8"/><rect x="86" y="14" width="1" height="2" fill="#a8a8a8"/><rect x="94" y="12" width="1" height="4" fill="#a8a8a8"/><rect x="102" y="14" width="1" height="2" fill="#a8a8a8"/><rect x="110" y="14" width="1" height="2" fill="#a8a8a8"/><rect x="118" y="1" width="1" height="15" fill="#a8a8a8"/><rect x="126" y="14" width="1" height="2" fill="#a8a8a8"/><rect x="134" y="14" width="1" height="2" fill="#a8a8a8"/><rect x="142" y="12" width="1" height="4" fill="#a8a8a8"/><rect x="150" y="14" width="1" height="2" fill="#a8a8a8"/><rect x="158" y="14" width="1" height="2" fill="#a8a8a8"/><rect x="166" y="1" width="1" height="15" fill="#a8a8a8"/><rect x="174" y="14" width="1" height="2" fill="#a8a8a8"/><rect x="182" y="14" width="1" height="2" fill="#a8a8a8"/><rect x="190" y="12" width="1" height="4" fill="#a8a8a8"/><rect x="198" y="14" width="1" height="2" fill="#a8a8a8"/><rect x="206" y="14" width="1" height="2" fill="#a8a8a8"/><rect x="214" y="1" width="1" height="15" fill="#a8a8a8"/><rect x="222" y="14" width="1" height="2" fill="#a8a8a8"/><rect x="230" y="14" width="1" height="2" fill="#a8a8a8"/><rect x="238" y="12" width="1" height="4" fill="#a8a8a8"/><rect x="246" y="14" width="1" height="2" fill="#a8a8a8"/><rect x="254" y="14" width="1" height="2" fill="#a8a8a8"/><rect x="262" y="1" width="1" height="15" fill="#a8a8a8"/><rect x="270" y="14" width="1" height="2" fill="#a8a8a8"/><rect x="278" y="14" width="1" height="2" fill="#a8a8a8"/><rect x="286" y="12" width="1" height="4" fill="#a8a8a8"/><rect x="294" y="14" width="1" height="2" fill="#a8a8a8"/><rect x="302" y="14" width="1" height="2" fill="#a8a8a8"/><rect x="310" y="1" width="1" height="15" fill="#a8a8a8"/><rect x="318" y="14" width="1" height="2" fill="#a8a8a8"/><rect x="326" y="14" width="1" height="2" fill="#a8a8a8"/><rect x="334" y="12" width="1" height="4" fill="#a8a8a8"/><rect x="342" y="14" width="1" height="2" fill="#a8a8a8"/><rect x="350" y="14" width="1" height="2" fill="#a8a8a8"/><rect x="358" y="1" width="1" height="15" fill="#a8a8a8"/><rect x="366" y="14" width="1" height="2" fill="#a8a8a8"/><rect x="374" y="14" width="1" height="2" fill="#a8a8a8"/><rect x="382" y="12" width="1" height="4" fill="#a8a8a8"/><rect x="390" y="14" width="1" height="2" fill="#a8a8a8"/><rect x="398" y="14" width="1" height="2" fill="#a8a8a8"/><rect x="406" y="1" width="1" height="15" fill="#a8a8a8"/><rect x="414" y="14" width="1" height="2" fill="#a8a8a8"/><rect x="422" y="14" width="1" height="2" fill="#a8a8a8"/><rect x="430" y="12" width="1" height="4" fill="#a8a8a8"/><rect x="439" y="14" width="1" height="2" fill="#a8a8a8"/><rect x="447" y="14" width="1" height="2" fill="#a8a8a8"/><rect x="455" y="1" width="1" height="15" fill="#a8a8a8"/><rect x="463" y="14" width="1" height="2" fill="#a8a8a8"/><rect x="471" y="14" width="1" height="2" fill="#a8a8a8"/><rect x="479" y="12" width="1" height="4" fill="#a8a8a8"/><rect x="487" y="14" width="1" height="2" fill="#a8a8a8"/><rect x="495" y="14" width="1" height="2" fill="#a8a8a8"/><rect x="503" y="1" width="1" height="15" fill="#a8a8a8"/><rect x="511" y="14" width="1" height="2" fill="#a8a8a8"/><rect x="519" y="14" width="1" height="2" fill="#a8a8a8"/><rect x="527" y="12" width="1" height="4" fill="#a8a8a8"/><rect x="535" y="14" width="1" height="2" fill="#a8a8a8"/><rect x="543" y="14" width="1" height="2" fill="#a8a8a8"/><rect x="551" y="1" width="1" height="15" fill="#a8a8a8"/><rect x="559" y="14" width="1" height="2" fill="#a8a8a8"/><rect x="567" y="14" width="1" height="2" fill="#a8a8a8"/><rect x="575" y="12" width="1" height="4" fill="#a8a8a8"/><rect x="583" y="14" width="1" height="2" fill="#a8a8a8"/><rect x="591" y="14" width="1" height="2" fill="#a8a8a8"/><rect x="599" y="1" width="1" height="15" fill="#a8a8a8"/><rect x="607" y="14" width="1" height="2" fill="#a8a8a8"/><rect x="615" y="14" width="1" height="2" fill="#a8a8a8"/><rect x="623" y="12" width="1" height="4" fill="#a8a8a8"/><rect x="631" y="14" width="1" height="2" fill="#a8a8a8"/><rect x="639" y="14" width="1" height="2" fill="#a8a8a8"/><rect x="647" y="1" width="1" height="15" fill="#a8a8a8"/><rect x="655" y="14" width="1" height="2" fill="#a8a8a8"/><rect x="663" y="14" width="1" height="2" fill="#a8a8a8"/><rect x="671" y="12" width="1" height="4" fill="#a8a8a8"/><rect x="679" y="14" width="1" height="2" fill="#a8a8a8"/><rect x="687" y="14" width="1" height="2" fill="#a8a8a8"/><rect x="695" y="1" width="1" height="15" fill="#a8a8a8"/><rect x="703" y="14" width="1" height="2" fill="#a8a8a8"/><rect x="711" y="14" width="1" height="2" fill="#a8a8a8"/><rect x="719" y="12" width="1" height="4" fill="#a8a8a8"/><rect x="727" y="14" width="1" height="2" fill="#a8a8a8"/><rect x="735" y="14" width="1" height="2" fill="#a8a8a8"/><rect x="743" y="1" width="1" height="15" fill="#a8a8a8"/><rect x="751" y="14" width="1" height="2" fill="#a8a8a8"/><rect x="759" y="14" width="1" height="2" fill="#a8a8a8"/><rect x="767" y="12" width="1" height="4" fill="#a8a8a8"/><rect x="775" y="14" width="1" height="2" fill="#a8a8a8"/><rect x="783" y="14" width="1" height="2" fill="#a8a8a8"/><rect x="791" y="1" width="1" height="15" fill="#a8a8a8"/><rect x="799" y="14" width="1" height="2" fill="#a8a8a8"/><rect x="807" y="14" width="1" height="2" fill="#a8a8a8"/><rect x="815" y="12" width="1" height="4" fill="#a8a8a8"/><rect x="823" y="14" width="1" height="2" fill="#a8a8a8"/><rect x="831" y="14" width="1" height="2" fill="#a8a8a8"/><rect x="839" y="1" width="1" height="15" fill="#a8a8a8"/><rect x="847" y="14" width="1" height="2" fill="#a8a8a8"/><rect x="855" y="14" width="1" height="2" fill="#a8a8a8"/><rect x="863" y="12" width="1" height="4" fill="#a8a8a8"/><rect x="871" y="14" width="1" height="2" fill="#a8a8a8"/><rect x="879" y="14" width="1" height="2" fill="#a8a8a8"/><rect x="887" y="1" width="1" height="15" fill="#a8a8a8"/><rect x="895" y="14" width="1" height="2" fill="#a8a8a8"/><rect x="903" y="14" width="1" height="2" fill="#a8a8a8"/><rect x="911" y="12" width="1" height="4" fill="#a8a8a8"/><rect x="919" y="14" width="1" height="2" fill="#a8a8a8"/><rect x="927" y="14" width="1" height="2" fill="#a8a8a8"/><rect x="935" y="1" width="1" height="15" fill="#a8a8a8"/><rect x="943" y="14" width="1" height="2" fill="#a8a8a8"/><rect x="951" y="14" width="1" height="2" fill="#a8a8a8"/><rect x="959" y="12" width="1" height="4" fill="#a8a8a8"/><rect x="967" y="14" width="1" height="2" fill="#a8a8a8"/><rect x="975" y="14" width="1" height="2" fill="#a8a8a8"/><rect x="983" y="1" width="1" height="15" fill="#a8a8a8"/><rect x="991" y="14" width="1" height="2" fill="#a8a8a8"/><rect x="999" y="14" width="1" height="2" fill="#a8a8a8"/><rect x="1007" y="12" width="1" height="4" fill="#a8a8a8"/><rect x="1015" y="14" width="1" height="2" fill="#a8a8a8"/><rect x="1023" y="14" width="1" height="2" fill="#a8a8a8"/><rect x="1031" y="1" width="1" height="15" fill="#a8a8a8"/><rect x="1039" y="14" width="1" height="2" fill="#a8a8a8"/><rect x="1047" y="14" width="1" height="2" fill="#a8a8a8"/><rect x="1055" y="12" width="1" height="4" fill="#a8a8a8"/><rect x="1063" y="14" width="1" height="2" fill="#a8a8a8"/><rect x="1071" y="14" width="1" height="2" fill="#a8a8a8"/><rect x="1079" y="1" width="1" height="15" fill="#a8a8a8"/><rect x="1087" y="14" width="1" height="2" fill="#a8a8a8"/><rect x="1095" y="14" width="1" height="2" fill="#a8a8a8"/><rect x="1103" y="12" width="1" height="4" fill="#a8a8a8"/><rect x="1111" y="14" width="1" height="2" fill="#a8a8a8"/><rect x="1119" y="14" width="1" height="2" fill="#a8a8a8"/><rect x="1127" y="1" width="1" height="15" fill="#a8a8a8"/><rect x="1135" y="14" width="1" height="2" fill="#a8a8a8"/><rect x="1143" y="14" width="1" height="2" fill="#a8a8a8"/><rect x="1151" y="12" width="1" height="4" fill="#a8a8a8"/><rect x="1159" y="14" width="1" height="2" fill="#a8a8a8"/><rect x="1167" y="14" width="1" height="2" fill="#a8a8a8"/><rect x="1175" y="1" width="1" height="15" fill="#a8a8a8"/><rect x="1183" y="14" width="1" height="2" fill="#a8a8a8"/><rect x="1191" y="14" width="1" height="2" fill="#a8a8a8"/><rect x="1199" y="12" width="1" height="4" fill="#a8a8a8"/><rect x="1207" y="14" width="1" height="2" fill="#a8a8a8"/><rect x="1215" y="14" width="1" height="2" fill="#a8a8a8"/><rect x="1223" y="1" width="1" height="15" fill="#a8a8a8"/><rect x="1231" y="14" width="1" height="2" fill="#a8a8a8"/><rect x="1239" y="14" width="1" height="2" fill="#a8a8a8"/><rect x="1247" y="12" width="1" height="4" fill="#a8a8a8"/><rect x="1255" y="14" width="1" height="2" fill="#a8a8a8"/><rect x="1263" y="14" width="1" height="2" fill="#a8a8a8"/><rect x="1271" y="1" width="1" height="15" fill="#a8a8a8"/><rect x="1279" y="14" width="1" height="2" fill="#a8a8a8"/><rect x="1287" y="14" width="1" height="2" fill="#a8a8a8"/><rect x="1295" y="12" width="1" height="4" fill="#a8a8a8"/><rect x="1303" y="14" width="1" height="2" fill="#a8a8a8"/><rect x="1311" y="14" width="1" height="2" fill="#a8a8a8"/><rect x="1319" y="1" width="1" height="15" fill="#a8a8a8"/><rect x="1327" y="14" width="1" height="2" fill="#a8a8a8"/><rect x="1335" y="14" width="1" height="2" fill="#a8a8a8"/><rect x="1343" y="12" width="1" height="4" fill="#a8a8a8"/><rect x="1351" y="14" width="1" height="2" fill="#a8a8a8"/><rect x="1359" y="14" width="1" height="2" fill="#a8a8a8"/><rect x="1367" y="1" width="1" height="15" fill="#a8a8a8"/><rect x="1375" y="14" width="1" height="2" fill="#a8a8a8"/><rect x="1383" y="14" width="1" height="2" fill="#a8a8a8"/><rect x="1391" y="12" width="1" height="4" fill="#a8a8a8"/><rect x="1399" y="14" width="1" height="2" fill="#a8a8a8"/><rect x="1407" y="14" width="1" height="2" fill="#a8a8a8"/><rect x="1415" y="1" width="1" height="15" fill="#a8a8a8"/><rect x="1423" y="14" width="1" height="2" fill="#a8a8a8"/><rect x="1431" y="14" width="1" height="2" fill="#a8a8a8"/><rect x="1439" y="12" width="1" height="4" fill="#a8a8a8"/><rect x="1447" y="14" width="1" height="2" fill="#a8a8a8"/><rect x="1455" y="14" width="1" height="2" fill="#a8a8a8"/><rect x="1463" y="1" width="1" height="15" fill="#a8a8a8"/><rect x="1471" y="14" width="1" height="2" fill="#a8a8a8"/><rect x="1479" y="14" width="1" height="2" fill="#a8a8a8"/><rect x="1487" y="12" width="1" height="4" fill="#a8a8a8"/><rect x="1495" y="14" width="1" height="2" fill="#a8a8a8"/><rect x="1503" y="14" width="1" height="2" fill="#a8a8a8"/><rect x="1511" y="1" width="1" height="15" fill="#a8a8a8"/><rect x="1519" y="14" width="1" height="2" fill="#a8a8a8"/><rect x="1527" y="14" width="1" height="2" fill="#a8a8a8"/><rect x="1535" y="12" width="1" height="4" fill="#a8a8a8"/><rect x="1543" y="14" width="1" height="2" fill="#a8a8a8"/><rect x="1551" y="14" width="1" height="2" fill="#a8a8a8"/><rect x="1559" y="1" width="1" height="15" fill="#a8a8a8"/><rect x="1567" y="14" width="1" height="2" fill="#a8a8a8"/><rect x="1575" y="14" width="1" height="2" fill="#a8a8a8"/><rect x="1583" y="12" width="1" height="4" fill="#a8a8a8"/><rect x="1591" y="14" width="1" height="2" fill="#a8a8a8"/><rect x="1599" y="14" width="1" height="2" fill="#a8a8a8"/><rect x="1607" y="1" width="1" height="15" fill="#a8a8a8"/><rect x="1615" y="14" width="1" height="2" fill="#a8a8a8"/><rect x="1623" y="14" width="1" height="2" fill="#a8a8a8"/><rect x="1631" y="12" width="1" height="4" fill="#a8a8a8"/><rect x="1639" y="14" width="1" height="2" fill="#a8a8a8"/><rect x="1647" y="14" width="1" height="2" fill="#a8a8a8"/><rect x="1655" y="1" width="1" height="15" fill="#a8a8a8"/><rect x="1663" y="14" width="1" height="2" fill="#a8a8a8"/><rect x="1671" y="14" width="1" height="2" fill="#a8a8a8"/><rect x="0" y="16" width="1679" height="1" fill="#8a8a8a"/></svg>
<span style="left:84px;top:120px;font-size:9.5px;color:#dde6ee;line-height:10px;letter-spacing:-0.2px">102</span>
<span style="left:132px;top:120px;font-size:9.5px;color:#dde6ee;line-height:10px;letter-spacing:-0.2px">96</span>
<span style="left:180px;top:120px;font-size:9.5px;color:#dde6ee;line-height:10px;letter-spacing:-0.2px">90</span>
<span style="left:228px;top:120px;font-size:9.5px;color:#dde6ee;line-height:10px;letter-spacing:-0.2px">84</span>
<span style="left:276px;top:120px;font-size:9.5px;color:#dde6ee;line-height:10px;letter-spacing:-0.2px">78</span>
<span style="left:324px;top:120px;font-size:9.5px;color:#dde6ee;line-height:10px;letter-spacing:-0.2px">72</span>
<span style="left:372px;top:120px;font-size:9.5px;color:#dde6ee;line-height:10px;letter-spacing:-0.2px">66</span>
<span style="left:420px;top:120px;font-size:9.5px;color:#dde6ee;line-height:10px;letter-spacing:-0.2px">60</span>
<span style="left:468px;top:120px;font-size:9.5px;color:#dde6ee;line-height:10px;letter-spacing:-0.2px">54</span>
<span style="left:517px;top:120px;font-size:9.5px;color:#dde6ee;line-height:10px;letter-spacing:-0.2px">48</span>
<span style="left:565px;top:120px;font-size:9.5px;color:#dde6ee;line-height:10px;letter-spacing:-0.2px">42</span>
<span style="left:613px;top:120px;font-size:9.5px;color:#dde6ee;line-height:10px;letter-spacing:-0.2px">36</span>
<span style="left:661px;top:120px;font-size:9.5px;color:#dde6ee;line-height:10px;letter-spacing:-0.2px">30</span>
<span style="left:709px;top:120px;font-size:9.5px;color:#dde6ee;line-height:10px;letter-spacing:-0.2px">24</span>
<span style="left:757px;top:120px;font-size:9.5px;color:#dde6ee;line-height:10px;letter-spacing:-0.2px">18</span>
<span style="left:805px;top:120px;font-size:9.5px;color:#dde6ee;line-height:10px;letter-spacing:-0.2px">12</span>
<span style="left:853px;top:120px;font-size:9.5px;color:#dde6ee;line-height:10px;letter-spacing:-0.2px">6</span>
<span style="left:901px;top:120px;font-size:9.5px;color:#dde6ee;line-height:10px;letter-spacing:-0.2px">0</span>
<span style="left:949px;top:120px;font-size:9.5px;color:#dde6ee;line-height:10px;letter-spacing:-0.2px">6</span>
<span style="left:997px;top:120px;font-size:9.5px;color:#dde6ee;line-height:10px;letter-spacing:-0.2px">12</span>
<span style="left:1045px;top:120px;font-size:9.5px;color:#dde6ee;line-height:10px;letter-spacing:-0.2px">18</span>
<span style="left:1093px;top:120px;font-size:9.5px;color:#dde6ee;line-height:10px;letter-spacing:-0.2px">24</span>
<span style="left:1141px;top:120px;font-size:9.5px;color:#dde6ee;line-height:10px;letter-spacing:-0.2px">30</span>
<span style="left:1189px;top:120px;font-size:9.5px;color:#dde6ee;line-height:10px;letter-spacing:-0.2px">36</span>
<span style="left:1237px;top:120px;font-size:9.5px;color:#dde6ee;line-height:10px;letter-spacing:-0.2px">42</span>
<span style="left:1285px;top:120px;font-size:9.5px;color:#dde6ee;line-height:10px;letter-spacing:-0.2px">48</span>
<span style="left:1333px;top:120px;font-size:9.5px;color:#dde6ee;line-height:10px;letter-spacing:-0.2px">54</span>
<span style="left:1381px;top:120px;font-size:9.5px;color:#dde6ee;line-height:10px;letter-spacing:-0.2px">60</span>
<span style="left:1429px;top:120px;font-size:9.5px;color:#dde6ee;line-height:10px;letter-spacing:-0.2px">66</span>
<span style="left:1477px;top:120px;font-size:9.5px;color:#dde6ee;line-height:10px;letter-spacing:-0.2px">72</span>
<span style="left:1525px;top:120px;font-size:9.5px;color:#dde6ee;line-height:10px;letter-spacing:-0.2px">78</span>
<span style="left:1573px;top:120px;font-size:9.5px;color:#dde6ee;line-height:10px;letter-spacing:-0.2px">84</span>
<span style="left:1621px;top:120px;font-size:9.5px;color:#dde6ee;line-height:10px;letter-spacing:-0.2px">90</span>
<span style="left:1669px;top:120px;font-size:9.5px;color:#dde6ee;line-height:10px;letter-spacing:-0.2px">96</span>
<span style="left:1717px;top:120px;font-size:9.5px;color:#dde6ee;line-height:10px;letter-spacing:-0.2px">102</span>
<span style="left:44px;top:267px;font-size:9.5px;color:#dde6ee;line-height:10px">6</span>
<span style="left:44px;top:315px;font-size:9.5px;color:#dde6ee;line-height:10px">0</span>
<span style="left:44px;top:363px;font-size:9.5px;color:#dde6ee;line-height:10px">6</span>
<span style="left:44px;top:411px;font-size:9.5px;color:#dde6ee;line-height:10px">1</span>
<span style="left:44px;top:420px;font-size:9.5px;color:#dde6ee;line-height:10px">2</span>
<span style="left:44px;top:459px;font-size:9.5px;color:#dde6ee;line-height:10px">1</span>
<span style="left:44px;top:468px;font-size:9.5px;color:#dde6ee;line-height:10px">8</span>
<span style="left:44px;top:507px;font-size:9.5px;color:#dde6ee;line-height:10px">2</span>
<span style="left:44px;top:516px;font-size:9.5px;color:#dde6ee;line-height:10px">4</span>
<span style="left:44px;top:555px;font-size:9.5px;color:#dde6ee;line-height:10px">3</span>
<span style="left:44px;top:564px;font-size:9.5px;color:#dde6ee;line-height:10px">0</span>
<span style="left:44px;top:604px;font-size:9.5px;color:#dde6ee;line-height:10px">3</span>
<span style="left:44px;top:613px;font-size:9.5px;color:#dde6ee;line-height:10px">6</span>
<span style="left:44px;top:652px;font-size:9.5px;color:#dde6ee;line-height:10px">4</span>
<span style="left:44px;top:661px;font-size:9.5px;color:#dde6ee;line-height:10px">2</span>
<span style="left:44px;top:700px;font-size:9.5px;color:#dde6ee;line-height:10px">4</span>
<span style="left:44px;top:709px;font-size:9.5px;color:#dde6ee;line-height:10px">8</span>
<span style="left:44px;top:748px;font-size:9.5px;color:#dde6ee;line-height:10px">5</span>
<span style="left:44px;top:757px;font-size:9.5px;color:#dde6ee;line-height:10px">4</span>
<span style="left:44px;top:796px;font-size:9.5px;color:#dde6ee;line-height:10px">6</span>
<span style="left:44px;top:805px;font-size:9.5px;color:#dde6ee;line-height:10px">0</span>
<span style="left:44px;top:844px;font-size:9.5px;color:#dde6ee;line-height:10px">6</span>
<span style="left:44px;top:853px;font-size:9.5px;color:#dde6ee;line-height:10px">6</span>
<svg style="left:42px;top:266px;" width="16" height="626" viewBox="0 0 16 626"><rect x="0" y="0" width="16" height="1" fill="#a8a8a8"/><rect x="13" y="8" width="2" height="1" fill="#a8a8a8"/><rect x="13" y="16" width="2" height="1" fill="#a8a8a8"/><rect x="11" y="24" width="4" height="1" fill="#a8a8a8"/><rect x="13" y="32" width="2" height="1" fill="#a8a8a8"/><rect x="13" y="40" width="2" height="1" fill="#a8a8a8"/><rect x="0" y="48" width="16" height="1" fill="#a8a8a8"/><rect x="13" y="56" width="2" height="1" fill="#a8a8a8"/><rect x="13" y="64" width="2" height="1" fill="#a8a8a8"/><rect x="11" y="72" width="4" height="1" fill="#a8a8a8"/><rect x="13" y="80" width="2" height="1" fill="#a8a8a8"/><rect x="13" y="88" width="2" height="1" fill="#a8a8a8"/><rect x="0" y="96" width="16" height="1" fill="#a8a8a8"/><rect x="13" y="104" width="2" height="1" fill="#a8a8a8"/><rect x="13" y="112" width="2" height="1" fill="#a8a8a8"/><rect x="11" y="120" width="4" height="1" fill="#a8a8a8"/><rect x="13" y="128" width="2" height="1" fill="#a8a8a8"/><rect x="13" y="136" width="2" height="1" fill="#a8a8a8"/><rect x="0" y="144" width="16" height="1" fill="#a8a8a8"/><rect x="13" y="152" width="2" height="1" fill="#a8a8a8"/><rect x="13" y="160" width="2" height="1" fill="#a8a8a8"/><rect x="11" y="168" width="4" height="1" fill="#a8a8a8"/><rect x="13" y="176" width="2" height="1" fill="#a8a8a8"/><rect x="13" y="184" width="2" height="1" fill="#a8a8a8"/><rect x="0" y="192" width="16" height="1" fill="#a8a8a8"/><rect x="13" y="200" width="2" height="1" fill="#a8a8a8"/><rect x="13" y="208" width="2" height="1" fill="#a8a8a8"/><rect x="11" y="216" width="4" height="1" fill="#a8a8a8"/><rect x="13" y="224" width="2" height="1" fill="#a8a8a8"/><rect x="13" y="232" width="2" height="1" fill="#a8a8a8"/><rect x="0" y="240" width="16" height="1" fill="#a8a8a8"/><rect x="13" y="248" width="2" height="1" fill="#a8a8a8"/><rect x="13" y="256" width="2" height="1" fill="#a8a8a8"/><rect x="11" y="264" width="4" height="1" fill="#a8a8a8"/><rect x="13" y="272" width="2" height="1" fill="#a8a8a8"/><rect x="13" y="280" width="2" height="1" fill="#a8a8a8"/><rect x="0" y="288" width="16" height="1" fill="#a8a8a8"/><rect x="13" y="296" width="2" height="1" fill="#a8a8a8"/><rect x="13" y="304" width="2" height="1" fill="#a8a8a8"/><rect x="11" y="312" width="4" height="1" fill="#a8a8a8"/><rect x="13" y="321" width="2" height="1" fill="#a8a8a8"/><rect x="13" y="329" width="2" height="1" fill="#a8a8a8"/><rect x="0" y="337" width="16" height="1" fill="#a8a8a8"/><rect x="13" y="345" width="2" height="1" fill="#a8a8a8"/><rect x="13" y="353" width="2" height="1" fill="#a8a8a8"/><rect x="11" y="361" width="4" height="1" fill="#a8a8a8"/><rect x="13" y="369" width="2" height="1" fill="#a8a8a8"/><rect x="13" y="377" width="2" height="1" fill="#a8a8a8"/><rect x="0" y="385" width="16" height="1" fill="#a8a8a8"/><rect x="13" y="393" width="2" height="1" fill="#a8a8a8"/><rect x="13" y="401" width="2" height="1" fill="#a8a8a8"/><rect x="11" y="409" width="4" height="1" fill="#a8a8a8"/><rect x="13" y="417" width="2" height="1" fill="#a8a8a8"/><rect x="13" y="425" width="2" height="1" fill="#a8a8a8"/><rect x="0" y="433" width="16" height="1" fill="#a8a8a8"/><rect x="13" y="441" width="2" height="1" fill="#a8a8a8"/><rect x="13" y="449" width="2" height="1" fill="#a8a8a8"/><rect x="11" y="457" width="4" height="1" fill="#a8a8a8"/><rect x="13" y="465" width="2" height="1" fill="#a8a8a8"/><rect x="13" y="473" width="2" height="1" fill="#a8a8a8"/><rect x="0" y="481" width="16" height="1" fill="#a8a8a8"/><rect x="13" y="489" width="2" height="1" fill="#a8a8a8"/><rect x="13" y="497" width="2" height="1" fill="#a8a8a8"/><rect x="11" y="505" width="4" height="1" fill="#a8a8a8"/><rect x="13" y="513" width="2" height="1" fill="#a8a8a8"/><rect x="13" y="521" width="2" height="1" fill="#a8a8a8"/><rect x="0" y="529" width="16" height="1" fill="#a8a8a8"/><rect x="13" y="537" width="2" height="1" fill="#a8a8a8"/><rect x="13" y="545" width="2" height="1" fill="#a8a8a8"/><rect x="11" y="553" width="4" height="1" fill="#a8a8a8"/><rect x="13" y="561" width="2" height="1" fill="#a8a8a8"/><rect x="13" y="569" width="2" height="1" fill="#a8a8a8"/><rect x="0" y="577" width="16" height="1" fill="#a8a8a8"/><rect x="13" y="585" width="2" height="1" fill="#a8a8a8"/><rect x="13" y="593" width="2" height="1" fill="#a8a8a8"/><rect x="11" y="601" width="4" height="1" fill="#a8a8a8"/><rect x="13" y="609" width="2" height="1" fill="#a8a8a8"/><rect x="13" y="617" width="2" height="1" fill="#a8a8a8"/></svg>
<div style="left:42px;top:891px;width:15px;height:1px;background:#8a8a8a"></div>
<svg style="left:1120px;top:120px;" width="1" height="15" viewBox="0 0 1 15"><path d="M0.5 0V15" stroke="#d0d0d0" stroke-dasharray="1 1"/></svg>
<svg style="left:42px;top:898px;" width="15" height="1" viewBox="0 0 15 1"><path d="M0 0.5H15" stroke="#d0d0d0" stroke-dasharray="1 1"/></svg>
<svg style="left:1741px;top:124px;" width="9" height="6" viewBox="0 0 9 6"><path d="M0 6H9L4.5 0Z" fill="#7a7a7a"/></svg>
<span style="left:1026px;top:354px;font-size:25px;font-weight:bold;color:#58595b;line-height:25px;letter-spacing:0.8px;-webkit-text-stroke:1.5px #58595b;transform:scaleX(1.02);transform-origin:0 0">PATHFINDER</span>
<span style="left:1149px;top:415px;font-size:12px;font-weight:bold;color:#4b4b9c;line-height:12px;-webkit-text-stroke:0.7px #4b4b9c;letter-spacing:0.3px;transform:scaleX(1.2);transform-origin:0 0">Add</span>
<span style="left:1140px;top:500px;font-size:12px;font-weight:bold;color:#4b4b9c;line-height:12px;-webkit-text-stroke:0.7px #4b4b9c;letter-spacing:0.5px;transform:scaleX(1.09);transform-origin:0 0">Subtract</span>
<svg style="left:960px;top:380px;" width="130" height="180" viewBox="0 0 130 180"><path d="M13.5 21.5H67A30.7 26.5 0 1 1 84.5 66.9V78.5H13.5Z" fill="none" stroke="#4a90e2" stroke-width="1"/><path d="M13.5 108.5H67A30.7 26.5 0 0 0 84.5 154V165.5H13.5Z" fill="none" stroke="#4a90e2" stroke-width="1"/></svg>
<div style="left:711px;top:499px;width:106px;height:66px;background:#ec008c;box-sizing:border-box;border:1px solid #4a9ae8"></div>
<svg style="left:768px;top:482px;" width="78" height="70" viewBox="0 0 78 70"><ellipse cx="38.5" cy="34.5" rx="36" ry="32" fill="#fff200" stroke="#4a9ae8" stroke-width="1"/></svg>
<svg style="left:850px;top:505px;" width="105" height="40" viewBox="0 0 105 40"><path d="M6 18H78V23H6Z" fill="#cd1316"/><path d="M99 20.6L70.5 7.5Q77 14 77 20.6Q77 27 70.5 34.5Z" fill="#cd1316"/></svg>
<svg style="left:6px;top:95px;" width="8" height="5" viewBox="0 0 8 5"><path d="M0 0L3 2.5L0 5ZM4 0L7 2.5L4 5Z" fill="#9a9a9a"/></svg>
<svg style="left:10px;top:106px;" width="20" height="5" viewBox="0 0 20 5"><rect x="0" y="0" width="1" height="5" fill="#151515"/><rect x="2" y="0" width="1" height="5" fill="#151515"/><rect x="4" y="0" width="1" height="5" fill="#151515"/><rect x="6" y="0" width="1" height="5" fill="#151515"/><rect x="8" y="0" width="1" height="5" fill="#151515"/><rect x="10" y="0" width="1" height="5" fill="#151515"/><rect x="12" y="0" width="1" height="5" fill="#151515"/><rect x="14" y="0" width="1" height="5" fill="#151515"/><rect x="16" y="0" width="1" height="5" fill="#151515"/><rect x="18" y="0" width="1" height="5" fill="#151515"/></svg>
<div style="left:6px;top:118px;width:28px;height:22px;background:#333;box-sizing:border-box;border:1px solid #2c2c2c"></div>
<svg style="left:0px;top:118px;" width="40" height="20" viewBox="0 0 40 20"><path d="M15 1.5V14.5L18.3 11.3L20.8 16.5L23.3 15.2L21 10.3H25Z" fill="#2a2a2a" stroke="#e6e6e6" stroke-width="1.1" stroke-linejoin="round"/></svg>
<svg style="left:0px;top:143px;" width="40" height="20" viewBox="0 0 40 20"><path d="M16 2V15L19.3 11.7L21.5 16.8L24 15.6L21.8 10.8H25.3Z" fill="#cacaca" stroke="#222" stroke-width="0.5"/></svg>
<svg style="left:0px;top:167px;" width="40" height="20" viewBox="0 0 40 20"><path d="M14 2.5H20.5L25.5 7.5V17H14Z" fill="#c4c4c4"/><path d="M20.5 2.5V7.5H25.5Z" fill="#e8e8e8" stroke="#333" stroke-width="0.6"/><path d="M23 11V18.8L24.8 17.2L26.3 19.5L27.3 19L26 16.5H28.3Z" fill="#e6e6e6" stroke="#333" stroke-width="0.5"/></svg>
<svg style="left:0px;top:190px;" width="40" height="20" viewBox="0 0 40 20"><rect x="10" y="3" width="2" height="15" fill="#c8c8c8"/><rect x="28" y="3" width="2" height="15" fill="#c8c8c8"/><path d="M16 10.5H24" stroke="#d8d8d8" stroke-width="1.5"/><path d="M13 10.5L17 6.5V14.5Z M27 10.5L23 6.5V14.5Z" fill="#d8d8d8"/></svg>
<svg style="left:0px;top:215px;" width="40" height="20" viewBox="0 0 40 20"><path d="M14 7.5V17H26V7.5" stroke="#c8c8c8" stroke-width="2" fill="none"/><rect x="16" y="10" width="2" height="2" fill="#ddd"/><rect x="22" y="10" width="2" height="2" fill="#ddd"/><rect x="16" y="13" width="2" height="2" fill="#ddd"/><rect x="19" y="13" width="2" height="2" fill="#ddd"/><rect x="22" y="13" width="2" height="2" fill="#ddd"/><path d="M15.5 1.5L19.5 5.5" stroke="#c8c8c8" stroke-width="2"/><path d="M17 7H21.5V2.5Z" fill="#c8c8c8"/><path d="M32 16V19.5H28.5Z" fill="#e0e0e0"/></svg>
<svg style="left:0px;top:242px;" width="40" height="20" viewBox="0 0 40 20"><path d="M11 9.5Q12 8 13 9L22 17.5Q24 18.5 25 16.5" stroke="#d0d0d0" stroke-width="1.1" fill="none"/><path d="M25.5 5.2L20 11.5" stroke="#c8c8c8" stroke-width="2.2"/><path d="M22.5 2.5L28.5 8.2" stroke="#c8c8c8" stroke-width="2"/><path d="M18 9.2L21.8 12.8" stroke="#c8c8c8" stroke-width="1.6"/><path d="M32 16V19.5H28.5Z" fill="#e0e0e0"/></svg>
<svg style="left:0px;top:266px;" width="40" height="20" viewBox="0 0 40 20"><path d="M13 17L26 3.5" stroke="#e2e2e2" stroke-width="1.4"/></svg>
<svg style="left:0px;top:290px;" width="40" height="20" viewBox="0 0 40 20"><path d="M12 17.5L14.5 8.5L17.5 5L22 4L25.5 7.5L24.5 12L21 15Z" fill="#c6c6c6"/><path d="M21.5 2.5L23.5 0.5L29 6L27 8Z" fill="#cfcfcf"/><path d="M12.5 17L19 10.5" stroke="#333" stroke-width="0.8"/><circle cx="19" cy="10.5" r="1" fill="#333"/><path d="M32 16V19.5H28.5Z" fill="#e0e0e0"/></svg>
<svg style="left:0px;top:314px;" width="40" height="20" viewBox="0 0 40 20"><path d="M12 17.5L13.2 13.2L15 15Z" fill="#d6d6d6"/><path d="M13.2 13.2L22 4.5L25 7.5L16.2 16.2Z" fill="#8e8e8e" stroke="#c8c8c8" stroke-width="0.6"/><path d="M22 4.5L23.8 2.7Q25 1.8 26.2 3L27 3.8Q27.8 5 26.8 6L25 7.5Z" fill="#d2d2d2"/><path d="M32 16V19.5H28.5Z" fill="#e0e0e0"/></svg>
<svg style="left:0px;top:338px;" width="40" height="20" viewBox="0 0 40 20"><ellipse cx="20" cy="10" rx="7.8" ry="6" fill="#5c5c5c" stroke="#d4d4d4" stroke-width="1.2"/><path d="M15.5 5.5L24.5 14.5M24.5 5.5L15.5 14.5" stroke="#c8c8c8" stroke-width="1"/><path d="M32 16V19.5H28.5Z" fill="#e0e0e0"/></svg>
<svg style="left:0px;top:362px;" width="40" height="20" viewBox="0 0 40 20"><defs><linearGradient id="ge" x1="0" y1="0" x2="0" y2="1"><stop offset="0" stop-color="#8a8a8a"/><stop offset="1" stop-color="#666"/></linearGradient></defs><ellipse cx="20" cy="9.8" rx="7.8" ry="5.9" fill="url(#ge)" stroke="#d4d4d4" stroke-width="1.2"/><path d="M32 16V19.5H28.5Z" fill="#e0e0e0"/></svg>
<svg style="left:0px;top:387px;" width="40" height="20" viewBox="0 0 40 20"><circle cx="25" cy="6.5" r="2.2" fill="none" stroke="#d0d0d0" stroke-width="1.3"/><circle cx="25" cy="14" r="2.2" fill="none" stroke="#d0d0d0" stroke-width="1.3"/><path d="M12 6.5Q17 7.5 22.8 13M12 13.5Q17 12.5 22.8 7.5" stroke="#cfcfcf" stroke-width="1.5" fill="none"/></svg>
<svg style="left:0px;top:412px;" width="40" height="20" viewBox="0 0 40 20"><path d="M12 3.5V15.5L14.8 12.5L20 11.5Z" fill="#cacaca"/><rect x="16" y="4.5" width="2" height="2" fill="#d8d8d8"/><rect x="21" y="4.5" width="2" height="2" fill="#d8d8d8"/><rect x="26" y="4.5" width="2" height="2" fill="#d8d8d8"/><rect x="26" y="9.5" width="2" height="2" fill="#d8d8d8"/><rect x="26" y="14.5" width="2" height="2" fill="#d8d8d8"/><rect x="21" y="14.5" width="2" height="2" fill="#d8d8d8"/><rect x="16" y="14.5" width="2" height="2" fill="#d8d8d8"/><path d="M18 5.5H21M23 5.5H26M27 6.5V9.5M27 11.5V14.5M23 15.5H26M18 15.5H21" stroke="#bbb" stroke-width="0.8"/><path d="M32 16V19.5H28.5Z" fill="#e0e0e0"/></svg>
<svg style="left:0px;top:437px;" width="40" height="20" viewBox="0 0 40 20"><defs><linearGradient id="g1"><stop offset="0" stop-color="#222"/><stop offset="1" stop-color="#b8b8b8"/></linearGradient></defs><rect x="12.5" y="4.5" width="15" height="11" fill="url(#g1)" stroke="#e0e0e0"/></svg>
<svg style="left:0px;top:461px;" width="40" height="20" viewBox="0 0 40 20"><rect x="12.5" y="4.5" width="15" height="11" fill="#9a9a9a" stroke="#e0e0e0"/><rect x="13" y="5.0" width="3" height="3.3" fill="#e8e8e8"/><rect x="13" y="8.3" width="3" height="3.3" fill="#bbb"/><rect x="13" y="11.6" width="3" height="3.3" fill="#666"/><rect x="16" y="5.0" width="3" height="3.3" fill="#999"/><rect x="16" y="8.3" width="3" height="3.3" fill="#888"/><rect x="16" y="11.6" width="3" height="3.3" fill="#444"/><rect x="19" y="5.0" width="3" height="3.3" fill="#e8e8e8"/><rect x="19" y="8.3" width="3" height="3.3" fill="#bbb"/><rect x="19" y="11.6" width="3" height="3.3" fill="#666"/><rect x="22" y="5.0" width="3" height="3.3" fill="#999"/><rect x="22" y="8.3" width="3" height="3.3" fill="#888"/><rect x="22" y="11.6" width="3" height="3.3" fill="#444"/><rect x="25" y="5.0" width="3" height="3.3" fill="#e8e8e8"/><rect x="25" y="8.3" width="3" height="3.3" fill="#bbb"/><rect x="25" y="11.6" width="3" height="3.3" fill="#666"/></svg>
<svg style="left:0px;top:487px;" width="40" height="20" viewBox="0 0 40 20"><path d="M13 4H27V12.5L22 18H13Z" fill="#c4c4c4"/><path d="M22 18V13H27Z" fill="#e0e0e0" stroke="#333" stroke-width="0.6"/><path d="M16 8.5H24M16 10.5H24M16 12.5H19" stroke="#2a2a2a" stroke-width="0.9"/></svg>
<svg style="left:0px;top:511px;" width="40" height="20" viewBox="0 0 40 20"><path d="M13 18.5L14 15.5L21 8.5L23 10.5L16 17.5Z" fill="#4a4a4a" stroke="#e0e0e0" stroke-width="0.9"/><path d="M19.5 7L25 12.5" stroke="#c8c8c8" stroke-width="2.6"/><path d="M22 6.5L24.5 4Q26 2.8 27.2 4Q28.4 5.5 27 7L24.5 9.5Z" fill="#cfcfcf"/><path d="M32 16V19.5H28.5Z" fill="#e0e0e0"/></svg>
<svg style="left:0px;top:536px;" width="40" height="20" viewBox="0 0 40 20"><path d="M17 18V17L12 11.5Q11 10 12.5 9.5L15.5 11.5V5Q15.5 3.5 16.8 3.5Q18 3.5 18 5V9V2.5Q18 1 19.3 1Q20.6 1 20.6 2.5V9V3.5Q20.6 2 22 2Q23.3 2 23.3 3.5V10L25.5 5.5Q26.3 4.5 27.3 5.3Q28 6 27.5 7L25 14.5V18Z" fill="#c6c6c6"/></svg>
<svg style="left:0px;top:559px;" width="40" height="20" viewBox="0 0 40 20"><circle cx="18.5" cy="8" r="5" fill="#6e6e6e" stroke="#d4d4d4" stroke-width="1.1"/><path d="M22.5 12L27.5 17" stroke="#c8c8c8" stroke-width="2.4" stroke-linecap="round"/></svg>
<svg style="left:0px;top:580px;" width="40" height="60" viewBox="0 0 40 60"><rect x="18.5" y="15" width="10.5" height="11" fill="#3a3a3a" stroke="#777"/><rect x="20" y="16.5" width="7.5" height="8" fill="#555" stroke="#000" stroke-width="2.2"/><rect x="10" y="8" width="12" height="11.5" fill="#fff" stroke="#888"/><path d="M11 18.5L21 9" stroke="#f00" stroke-width="1.8"/><path d="M24.5 9Q27.5 9 28.5 12.5M24 7.5L25.5 9.5L23.5 10.5M27 11.5L28.5 13.5L30 11.5" stroke="#ccc" fill="none" stroke-width="0.9"/><rect x="13" y="31" width="7.5" height="7" fill="#222" stroke="#888"/><rect x="9.5" y="27.5" width="7" height="7" fill="#eee" stroke="#888"/><path d="M10 34L16 28" stroke="#f00" stroke-width="1"/></svg>
<div style="left:5px;top:622px;width:13px;height:10px;background:#333"></div>
<svg style="left:7px;top:623px;" width="9" height="9" viewBox="0 0 9 9"><rect x="0.5" y="0.5" width="8" height="8" fill="#5a5a5a" stroke="#d0d0d0"/></svg>
<span style="left:24px;top:622px;font-family:'Liberation Serif',serif;font-weight:bold;font-size:12px;color:#d8d8d8;line-height:12px">T</span>
<div style="left:6px;top:641px;width:28px;height:22px;background:#383838;box-sizing:border-box;border:1px solid #2e2e2e"></div>
<svg style="left:6px;top:641px;" width="28" height="22" viewBox="0 0 28 22"><rect x="6.5" y="4.5" width="15" height="13" fill="#fff" stroke="#999"/><path d="M7.5 16.5L20.5 5.5" stroke="#f00" stroke-width="1.8"/><path d="M26 16V19.5H22.5Z" fill="#e0e0e0"/></svg>
<div style="left:6px;top:670px;width:28px;height:22px;background:#383838;box-sizing:border-box;border:1px solid #2e2e2e"></div>
<svg style="left:6px;top:670px;" width="28" height="22" viewBox="0 0 28 22"><rect x="9.5" y="5.5" width="11" height="11" fill="#3a3a3a" stroke="#cfcfcf"/><path d="M10 7.5H20" stroke="#cfcfcf"/><rect x="12" y="10" width="4" height="2" fill="#d8d8d8"/><rect x="14" y="11.5" width="4" height="3" fill="#d8d8d8"/><path d="M26 16V19.5H22.5Z" fill="#e0e0e0"/></svg>
<svg style="left:1905px;top:94px;" width="9" height="7" viewBox="0 0 9 7"><path d="M4 0.5L0.8 3.5L4 6.5M8 0.5L4.8 3.5L8 6.5" stroke="#c0c0c0" stroke-width="1.1" fill="none"/></svg>
<div style="left:1755px;top:103px;width:165px;height:1px;background:#5a5a5a"></div>
<svg style="left:1827px;top:106px;" width="19" height="4" viewBox="0 0 19 4"><rect x="0" y="0" width="1" height="4" fill="#151515"/><rect x="2" y="0" width="1" height="4" fill="#151515"/><rect x="4" y="0" width="1" height="4" fill="#151515"/><rect x="6" y="0" width="1" height="4" fill="#151515"/><rect x="8" y="0" width="1" height="4" fill="#151515"/><rect x="10" y="0" width="1" height="4" fill="#151515"/><rect x="12" y="0" width="1" height="4" fill="#151515"/><rect x="14" y="0" width="1" height="4" fill="#151515"/><rect x="16" y="0" width="1" height="4" fill="#151515"/><rect x="18" y="0" width="1" height="4" fill="#151515"/></svg>
<svg style="left:1765px;top:118px;" width="20" height="18" viewBox="0 0 20 18"><path d="M8 3.8H5.2A3.6 4.2 0 0 0 5.2 12.2H8M11 3.8H13.8A3.6 4.2 0 0 1 13.8 12.2H11" stroke="#cfcfcf" stroke-width="2.2" fill="none"/><path d="M6 8H13" stroke="#cfcfcf" stroke-width="2"/></svg>
<span style="left:1792px;top:121px;font-size:12px;font-weight:bold;color:#dedede;line-height:12px;transform:scaleX(0.92);transform-origin:0 0">Links</span>
<svg style="left:1765px;top:146px;" width="20" height="18" viewBox="0 0 20 18"><defs><linearGradient id="gp" x1="0" y1="0" x2="0" y2="1"><stop offset="0" stop-color="#e0e0e0"/><stop offset="1" stop-color="#b4b4b4"/></linearGradient></defs><path d="M1 4.5L3.5 2H8V15H1Z M10 2H14.5L17 4.5V15H10Z" fill="url(#gp)"/><path d="M9 0V17" stroke="#e8e8e8"/></svg>
<span style="left:1792px;top:149px;font-size:12px;font-weight:bold;color:#dedede;line-height:12px;transform:scaleX(0.92);transform-origin:0 0">Pages</span>
<svg style="left:1765px;top:174px;" width="20" height="18" viewBox="0 0 20 18"><path d="M9 0.5L17.5 5.5L9 10.5L0.5 5.5Z" fill="#cfcfcf"/><path d="M0.5 10L9 15.5L17.5 10L15 8.5L9 12.2L3 8.5Z" fill="#bdbdbd"/></svg>
<span style="left:1792px;top:177px;font-size:12px;font-weight:bold;color:#dedede;line-height:12px;transform:scaleX(0.92);transform-origin:0 0">Layers</span>
<div style="left:1755px;top:199px;width:165px;height:1px;background:#2c2c2c"></div>
<div style="left:1755px;top:200px;width:165px;height:1px;background:#565656"></div>
<svg style="left:1827px;top:203px;" width="19" height="4" viewBox="0 0 19 4"><rect x="0" y="0" width="1" height="4" fill="#151515"/><rect x="2" y="0" width="1" height="4" fill="#151515"/><rect x="4" y="0" width="1" height="4" fill="#151515"/><rect x="6" y="0" width="1" height="4" fill="#151515"/><rect x="8" y="0" width="1" height="4" fill="#151515"/><rect x="10" y="0" width="1" height="4" fill="#151515"/><rect x="12" y="0" width="1" height="4" fill="#151515"/><rect x="14" y="0" width="1" height="4" fill="#151515"/><rect x="16" y="0" width="1" height="4" fill="#151515"/><rect x="18" y="0" width="1" height="4" fill="#151515"/></svg>
<svg style="left:1765px;top:215px;" width="20" height="18" viewBox="0 0 20 18"><rect x="1" y="1.5" width="17" height="1.2" fill="#d4d4d4"/><rect x="1" y="5.5" width="17" height="2" fill="#d4d4d4"/><rect x="1" y="11" width="17" height="3" fill="#d4d4d4"/></svg>
<span style="left:1792px;top:218px;font-size:12px;font-weight:bold;color:#dedede;line-height:12px;transform:scaleX(0.92);transform-origin:0 0">Stroke</span>
<svg style="left:1765px;top:243px;" width="20" height="18" viewBox="0 0 20 18"><path d="M9.5 1.5C4 1.5 0 4.5 0 8.5C0 12.5 4 15.5 9.5 15.5C15 15.5 19 13 19 9.5C19 8 17.5 7.5 15.5 7.5C14 7.5 13.5 6.5 14.5 5.5C15.5 4 14 1.5 9.5 1.5Z" fill="#c8c8c8"/><circle cx="4" cy="8.5" r="1.4" fill="#555"/><circle cx="7" cy="12.3" r="1.4" fill="#555"/><circle cx="11.5" cy="12.5" r="1.4" fill="#555"/><circle cx="15.5" cy="11" r="1.4" fill="#555"/><circle cx="8" cy="4.8" r="1.2" fill="#555"/></svg>
<span style="left:1792px;top:246px;font-size:12px;font-weight:bold;color:#dedede;line-height:12px;transform:scaleX(0.92);transform-origin:0 0">Color</span>
<div style="left:1755px;top:268px;width:165px;height:1px;background:#2c2c2c"></div>
<div style="left:1755px;top:269px;width:165px;height:1px;background:#565656"></div>
<svg style="left:1827px;top:272px;" width="19" height="4" viewBox="0 0 19 4"><rect x="0" y="0" width="1" height="4" fill="#151515"/><rect x="2" y="0" width="1" height="4" fill="#151515"/><rect x="4" y="0" width="1" height="4" fill="#151515"/><rect x="6" y="0" width="1" height="4" fill="#151515"/><rect x="8" y="0" width="1" height="4" fill="#151515"/><rect x="10" y="0" width="1" height="4" fill="#151515"/><rect x="12" y="0" width="1" height="4" fill="#151515"/><rect x="14" y="0" width="1" height="4" fill="#151515"/><rect x="16" y="0" width="1" height="4" fill="#151515"/><rect x="18" y="0" width="1" height="4" fill="#151515"/></svg>
<svg style="left:1765px;top:284px;" width="20" height="18" viewBox="0 0 20 18"><rect x="1.5" y="3.5" width="15" height="11" fill="#cfcfcf"/><rect x="2.5" y="4.5" width="4" height="4" fill="#222"/><rect x="7" y="4.5" width="4" height="4" fill="#555"/><rect x="11.5" y="4.5" width="4" height="4" fill="#9a9a9a"/><rect x="2.5" y="9.5" width="4" height="4" fill="#888"/><rect x="7" y="9.5" width="4" height="4" fill="#555"/><rect x="11.5" y="9.5" width="4" height="4" fill="#333"/></svg>
<span style="left:1792px;top:287px;font-size:12px;font-weight:bold;color:#dedede;line-height:12px;transform:scaleX(0.92);transform-origin:0 0">Swatches</span>
<div style="left:1755px;top:309px;width:165px;height:1px;background:#2c2c2c"></div>
<div style="left:1755px;top:310px;width:165px;height:1px;background:#565656"></div>
<svg style="left:1827px;top:313px;" width="19" height="4" viewBox="0 0 19 4"><rect x="0" y="0" width="1" height="4" fill="#151515"/><rect x="2" y="0" width="1" height="4" fill="#151515"/><rect x="4" y="0" width="1" height="4" fill="#151515"/><rect x="6" y="0" width="1" height="4" fill="#151515"/><rect x="8" y="0" width="1" height="4" fill="#151515"/><rect x="10" y="0" width="1" height="4" fill="#151515"/><rect x="12" y="0" width="1" height="4" fill="#151515"/><rect x="14" y="0" width="1" height="4" fill="#151515"/><rect x="16" y="0" width="1" height="4" fill="#151515"/><rect x="18" y="0" width="1" height="4" fill="#151515"/></svg>
<svg style="left:1765px;top:325px;" width="20" height="18" viewBox="0 0 20 18"><path d="M1.5 15.5L6.8 2H8.2L13.5 15.5M4 10.5H11" stroke="#c8c8c8" stroke-width="1.9" fill="none"/><path d="M15.5 0V18" stroke="#d0d0d0" stroke-width="0.9"/></svg>
<span style="left:1792px;top:328px;font-size:12px;font-weight:bold;color:#dedede;line-height:12px;transform:scaleX(0.92);transform-origin:0 0">Character</span>
<div style="left:1755px;top:350px;width:165px;height:1px;background:#2c2c2c"></div>
<div style="left:1755px;top:351px;width:165px;height:1px;background:#565656"></div>
<svg style="left:1827px;top:354px;" width="19" height="4" viewBox="0 0 19 4"><rect x="0" y="0" width="1" height="4" fill="#151515"/><rect x="2" y="0" width="1" height="4" fill="#151515"/><rect x="4" y="0" width="1" height="4" fill="#151515"/><rect x="6" y="0" width="1" height="4" fill="#151515"/><rect x="8" y="0" width="1" height="4" fill="#151515"/><rect x="10" y="0" width="1" height="4" fill="#151515"/><rect x="12" y="0" width="1" height="4" fill="#151515"/><rect x="14" y="0" width="1" height="4" fill="#151515"/><rect x="16" y="0" width="1" height="4" fill="#151515"/><rect x="18" y="0" width="1" height="4" fill="#151515"/></svg>
<span style="left:1767px;top:366px;font-style:italic;font-size:17px;color:#b8b8b8;line-height:17px">fx</span>
<span style="left:1792px;top:369px;font-size:12px;font-weight:bold;color:#dedede;line-height:12px;transform:scaleX(0.92);transform-origin:0 0">Effects</span>
<div style="left:1755px;top:391px;width:165px;height:1px;background:#2c2c2c"></div>
<div style="left:1755px;top:392px;width:165px;height:1px;background:#565656"></div>
<svg style="left:1827px;top:395px;" width="19" height="4" viewBox="0 0 19 4"><rect x="0" y="0" width="1" height="4" fill="#151515"/><rect x="2" y="0" width="1" height="4" fill="#151515"/><rect x="4" y="0" width="1" height="4" fill="#151515"/><rect x="6" y="0" width="1" height="4" fill="#151515"/><rect x="8" y="0" width="1" height="4" fill="#151515"/><rect x="10" y="0" width="1" height="4" fill="#151515"/><rect x="12" y="0" width="1" height="4" fill="#151515"/><rect x="14" y="0" width="1" height="4" fill="#151515"/><rect x="16" y="0" width="1" height="4" fill="#151515"/><rect x="18" y="0" width="1" height="4" fill="#151515"/></svg>
<svg style="left:1765px;top:407px;" width="20" height="18" viewBox="0 0 20 18"><path d="M1 1.5H18M1 4H18M1 13.5H18M1 16H18M1 7H4M15 7H18M1 10H4M15 10H18" stroke="#c8c8c8"/><circle cx="9.5" cy="8.5" r="4" fill="#c8c8c8"/></svg>
<span style="left:1792px;top:410px;font-size:12px;font-weight:bold;color:#dedede;line-height:12px;transform:scaleX(0.92);transform-origin:0 0">Text Wrap</span>
<div style="left:1755px;top:432px;width:165px;height:1px;background:#2c2c2c"></div>
<div style="left:1755px;top:433px;width:165px;height:1px;background:#565656"></div>
<svg style="left:1827px;top:436px;" width="19" height="4" viewBox="0 0 19 4"><rect x="0" y="0" width="1" height="4" fill="#151515"/><rect x="2" y="0" width="1" height="4" fill="#151515"/><rect x="4" y="0" width="1" height="4" fill="#151515"/><rect x="6" y="0" width="1" height="4" fill="#151515"/><rect x="8" y="0" width="1" height="4" fill="#151515"/><rect x="10" y="0" width="1" height="4" fill="#151515"/><rect x="12" y="0" width="1" height="4" fill="#151515"/><rect x="14" y="0" width="1" height="4" fill="#151515"/><rect x="16" y="0" width="1" height="4" fill="#151515"/><rect x="18" y="0" width="1" height="4" fill="#151515"/></svg>
<svg style="left:1765px;top:448px;" width="20" height="18" viewBox="0 0 20 18"><defs><linearGradient id="g2"><stop offset="0" stop-color="#333"/><stop offset="1" stop-color="#eee"/></linearGradient></defs><rect x="1.5" y="2.5" width="16" height="12" fill="url(#g2)" stroke="#c8c8c8"/></svg>
<span style="left:1792px;top:451px;font-size:12px;font-weight:bold;color:#dedede;line-height:12px;transform:scaleX(0.92);transform-origin:0 0">Gradient</span>
<div style="left:1755px;top:473px;width:165px;height:1px;background:#2c2c2c"></div>
<div style="left:1755px;top:474px;width:165px;height:1px;background:#565656"></div>
<svg style="left:1827px;top:477px;" width="19" height="4" viewBox="0 0 19 4"><rect x="0" y="0" width="1" height="4" fill="#151515"/><rect x="2" y="0" width="1" height="4" fill="#151515"/><rect x="4" y="0" width="1" height="4" fill="#151515"/><rect x="6" y="0" width="1" height="4" fill="#151515"/><rect x="8" y="0" width="1" height="4" fill="#151515"/><rect x="10" y="0" width="1" height="4" fill="#151515"/><rect x="12" y="0" width="1" height="4" fill="#151515"/><rect x="14" y="0" width="1" height="4" fill="#151515"/><rect x="16" y="0" width="1" height="4" fill="#151515"/><rect x="18" y="0" width="1" height="4" fill="#151515"/></svg>
<svg style="left:1765px;top:489px;" width="20" height="18" viewBox="0 0 20 18"><path d="M1.5 1V17" stroke="#c8c8c8"/><rect x="4" y="3" width="9" height="5" fill="#c8c8c8"/><rect x="4" y="10" width="13" height="5" fill="#c8c8c8"/></svg>
<span style="left:1792px;top:492px;font-size:12px;font-weight:bold;color:#dedede;line-height:12px;transform:scaleX(0.92);transform-origin:0 0">Align</span>
<div style="left:1759px;top:513px;width:156px;height:24px;background:#323232;border-radius:3px;box-sizing:border-box;border:1px solid #2a2a2a"></div>
<svg style="left:1765px;top:517px;" width="20" height="18" viewBox="0 0 20 18"><rect x="1" y="1" width="10" height="10" fill="#c8c8c8"/><rect x="6" y="6" width="11" height="11" fill="#aaa"/><rect x="6" y="6" width="5" height="5" fill="#777"/></svg>
<span style="left:1792px;top:520px;font-size:12px;font-weight:bold;color:#dedede;line-height:12px;transform:scaleX(0.92);transform-origin:0 0">Pathfinder</span>
<div style="left:1755px;top:542px;width:165px;height:1px;background:#2c2c2c"></div>
<div style="left:1755px;top:543px;width:165px;height:1px;background:#565656"></div>
<div style="left:1512px;top:471px;width:242px;height:315px;background:#4a4a4a;box-sizing:border-box;border:2px solid #262626;border-top:4px solid #262626"></div>
<div style="left:1514px;top:475px;width:238px;height:27px;background:#333"></div>
<div style="left:1566px;top:475px;width:80px;height:28px;background:#4a4a4a"></div>
<span style="left:1525px;top:483px;font-size:12px;font-weight:bold;color:#9a9a9a;line-height:12px">Align</span>
<span style="left:1578px;top:483px;font-size:12px;font-weight:bold;color:#e2e2e2;line-height:12px">Pathfinder</span>
<svg style="left:1738px;top:485px;" width="9" height="8" viewBox="0 0 9 8"><path d="M0.5 0.5L4 4L0.5 7.5M4.5 0.5L8 4L4.5 7.5" stroke="#d0d0d0" fill="none"/></svg>
<span style="left:1518px;top:514px;font-size:11px;color:#dcdcdc;line-height:11px;transform:scaleX(0.91);transform-origin:0 0">Paths:</span>
<svg style="left:1522px;top:539px;" width="17" height="15" viewBox="0 0 17 15"><path d="M2.5 13C4 7 8 3 14 2" stroke="#d8d8d8" stroke-dasharray="1.2 1.2" fill="none"/><rect x="1" y="12" width="3" height="3" fill="#d8d8d8"/><rect x="13" y="0.5" width="3" height="3" fill="#d8d8d8"/></svg>
<svg style="left:1558px;top:539px;" width="18" height="15" viewBox="0 0 18 15"><ellipse cx="8" cy="9" rx="7.5" ry="5" fill="none" stroke="#d0d0d0" stroke-width="1.2"/><path d="M9 9L16 2" stroke="#d0d0d0" stroke-width="1.5"/></svg>
<svg style="left:1594px;top:539px;" width="19" height="15" viewBox="0 0 19 15"><ellipse cx="9" cy="9" rx="8" ry="5" fill="none" stroke="#d0d0d0" stroke-width="1.2" stroke-dasharray="14 3"/><rect x="6" y="1" width="3" height="3" fill="#d8d8d8"/><rect x="15" y="7" width="3" height="3" fill="#d8d8d8"/></svg>
<svg style="left:1630px;top:539px;" width="17" height="15" viewBox="0 0 17 15"><path d="M4 1.5H0.5V12H3M13 1.5H16.5V12H13" stroke="#d0d0d0" fill="none"/><path d="M8.5 3V12" stroke="#d0d0d0"/><circle cx="8.5" cy="2.5" r="1.5" fill="none" stroke="#d0d0d0"/><rect x="7" y="11" width="3" height="3" fill="#d0d0d0"/><path d="M3 12L5 14M12 1L14 3" stroke="#d0d0d0"/></svg>
<div style="left:1518px;top:565px;width:230px;height:1px;background:#3a3a3a"></div>
<span style="left:1518px;top:578px;font-size:11px;color:#dcdcdc;line-height:11px;transform:scaleX(0.91);transform-origin:0 0">Pathfinder:</span>
<svg style="left:1523px;top:602px;" width="15" height="15" viewBox="0 0 15 15"><rect x="0.5" y="0.5" width="9" height="9" fill="#9a9a9a" stroke="#d0d0d0"/><rect x="4.5" y="4.5" width="9" height="9" fill="#8a8a8a" stroke="#d0d0d0"/></svg>
<svg style="left:1559px;top:602px;" width="15" height="15" viewBox="0 0 15 15"><rect x="0.5" y="0.5" width="9" height="9" fill="none" stroke="#d0d0d0"/><rect x="4.5" y="4.5" width="9" height="9" fill="#4a4a4a" stroke="#b0b0b0"/><path d="M4.5 4.5H9.5V9.5" fill="none" stroke="#d0d0d0"/></svg>
<svg style="left:1595px;top:602px;" width="15" height="15" viewBox="0 0 15 15"><rect x="0.5" y="0.5" width="9" height="9" fill="none" stroke="#909090"/><rect x="4.5" y="4.5" width="9" height="9" fill="none" stroke="#909090"/><rect x="4.5" y="4.5" width="5" height="5" fill="#d0d0d0"/></svg>
<svg style="left:1631px;top:602px;" width="15" height="15" viewBox="0 0 15 15"><rect x="0.5" y="0.5" width="9" height="9" fill="#b0b0b0" stroke="#d0d0d0"/><rect x="4.5" y="4.5" width="9" height="9" fill="#b0b0b0" stroke="#d0d0d0"/><rect x="4.5" y="4.5" width="5" height="5" fill="#4a4a4a"/></svg>
<svg style="left:1667px;top:602px;" width="15" height="15" viewBox="0 0 15 15"><rect x="0.5" y="0.5" width="9" height="9" fill="none" stroke="#8a8a8a"/><path d="M9.5 4.5H13.5V13.5H4.5V9.5H9.5Z" fill="#b8b8b8" stroke="#d0d0d0"/></svg>
<div style="left:1518px;top:628px;width:230px;height:1px;background:#3a3a3a"></div>
<span style="left:1518px;top:641px;font-size:11px;color:#dcdcdc;line-height:11px;transform:scaleX(0.91);transform-origin:0 0">Convert Shape:</span>
<svg style="left:1523px;top:666px;" width="16" height="14" viewBox="0 0 16 14"><rect x="0.5" y="0.5" width="14" height="12" stroke="#d0d0d0" fill="none" stroke-width="1.1"/></svg>
<svg style="left:1559px;top:666px;" width="16" height="14" viewBox="0 0 16 14"><rect x="0.5" y="0.5" width="14" height="12" rx="3" stroke="#d0d0d0" fill="none" stroke-width="1.1"/></svg>
<svg style="left:1595px;top:666px;" width="16" height="14" viewBox="0 0 16 14"><path d="M4 0.5H11L14.5 4V9L11 12.5H4L0.5 9V4Z" stroke="#d0d0d0" fill="none" stroke-width="1.1"/></svg>
<svg style="left:1631px;top:666px;" width="16" height="14" viewBox="0 0 16 14"><path d="M3.5 0.5H11.5Q11.5 3.5 14.5 3.5V9.5Q11.5 9.5 11.5 12.5H3.5Q3.5 9.5 0.5 9.5V3.5Q3.5 3.5 3.5 0.5Z" stroke="#d0d0d0" fill="none" stroke-width="1.1"/></svg>
<svg style="left:1666px;top:666px;" width="18" height="14" viewBox="0 0 18 14"><ellipse cx="8.5" cy="6.5" rx="8" ry="6" stroke="#d0d0d0" fill="none" stroke-width="1.1"/></svg>
<svg style="left:1703px;top:666px;" width="16" height="14" viewBox="0 0 16 14"><path d="M7.5 0.5L14.5 12.5H0.5Z" stroke="#d0d0d0" fill="none" stroke-width="1.1"/></svg>
<svg style="left:1523px;top:696px;" width="16" height="14" viewBox="0 0 16 14"><path d="M4 0.5H11L14.5 6.5L11 12.5H4L0.5 6.5Z" stroke="#d0d0d0" fill="none" stroke-width="1.1"/></svg>
<svg style="left:1559px;top:696px;" width="16" height="14" viewBox="0 0 16 14"><path d="M1 13L13 1" stroke="#d0d0d0" fill="none" stroke-width="1.1"/></svg>
<svg style="left:1595px;top:696px;" width="16" height="14" viewBox="0 0 16 14"><path d="M7 0V13M0.5 6.5H13.5" stroke="#d0d0d0" fill="none" stroke-width="1.1"/></svg>
<div style="left:1518px;top:722px;width:230px;height:1px;background:#3a3a3a"></div>
<span style="left:1518px;top:735px;font-size:11px;color:#dcdcdc;line-height:11px;transform:scaleX(0.91);transform-origin:0 0">Convert Point:</span>
<svg style="left:1523px;top:758px;" width="15" height="18" viewBox="0 0 15 18"><rect x="2" y="2" width="4" height="4" fill="#d0d0d0"/><path d="M6 4H13M4 6V16" stroke="#d0d0d0"/></svg>
<svg style="left:1559px;top:758px;" width="17" height="18" viewBox="0 0 17 18"><rect x="0.5" y="1" width="4" height="4" fill="#d0d0d0"/><rect x="9" y="1.5" width="3" height="3" fill="#d0d0d0"/><rect x="1" y="11" width="3" height="3" fill="#d0d0d0"/><path d="M4.5 3H16M2.5 5V17" stroke="#d0d0d0"/></svg>
<svg style="left:1594px;top:757px;" width="17" height="18" viewBox="0 0 17 18"><rect x="1" y="0.5" width="3" height="3" fill="#d0d0d0"/><rect x="5" y="4" width="4" height="4" fill="#d0d0d0"/><rect x="13" y="13" width="3" height="3" fill="#d0d0d0"/><path d="M0 6H5M9 8L14 14M7 8C7 11 8 14 10 17" stroke="#d0d0d0" fill="none"/></svg>
<svg style="left:1630px;top:757px;" width="18" height="18" viewBox="0 0 18 18"><rect x="11" y="1" width="3" height="3" fill="#d0d0d0"/><rect x="5" y="5" width="4" height="4" fill="#d0d0d0"/><rect x="0.5" y="12" width="3" height="3" fill="#d0d0d0"/><path d="M9 6L12 4M13 3H18M5 9L2 13M6 9C5 12 5 14 5 17" stroke="#d0d0d0" fill="none"/></svg>
<svg style="left:1225px;top:490px;" width="360" height="145" viewBox="0 0 360 145"><path d="M84 28L215 101C258 126 288 132.6 323 132.6" stroke="#cd1316" stroke-width="9.8" fill="none"/><path d="M8.2 12.1Q40 8 106.9 10.2Q104 22 89.6 27.7L90 37.7Q100 52 106.9 69.7Q80 44 56 29.5Q34 17 8.2 12.1Z" fill="#cd1316"/></svg>
<div style="left:1548px;top:594px;width:33px;height:34px;box-sizing:border-box;border:5px solid #cd1316"></div>
</body></html>
